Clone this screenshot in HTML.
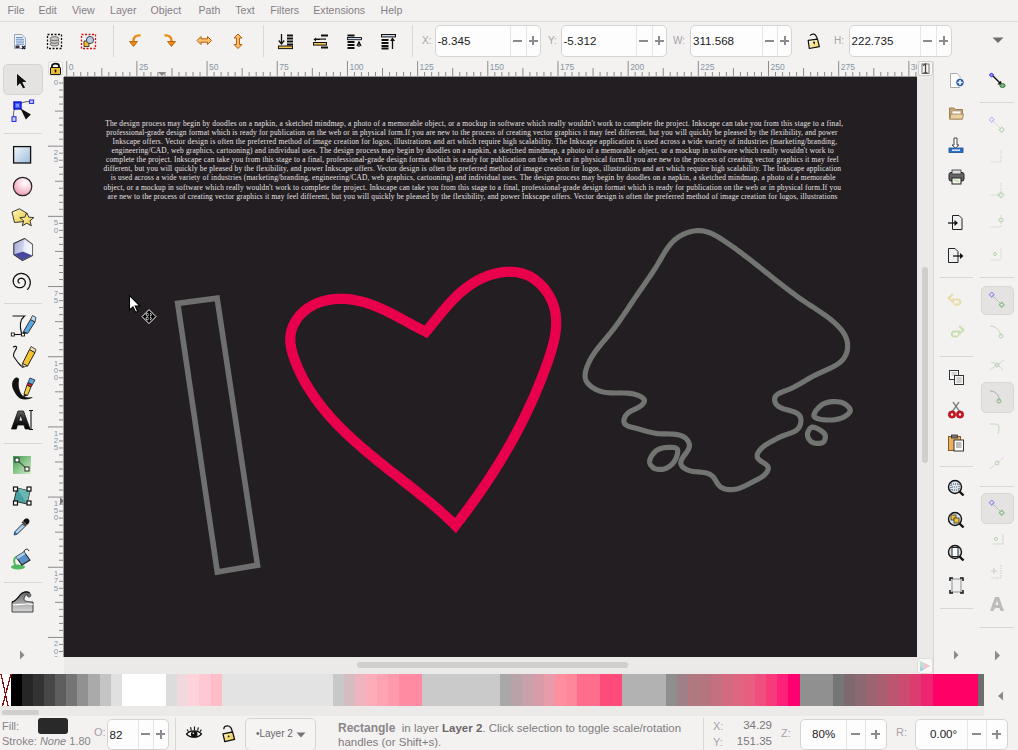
<!DOCTYPE html><html><head><meta charset="utf-8"><style>
*{margin:0;padding:0;box-sizing:border-box}
html,body{width:1018px;height:750px;overflow:hidden;background:#f4f2f1;font-family:"Liberation Sans", sans-serif;}
.a{position:absolute}
.ic{position:absolute;overflow:visible}
.menu{position:absolute;top:4px;font-size:10.6px;color:#857e86;}
.sb{position:absolute;background:#fdfdfd;border:1px solid #d6d4d1;border-radius:5px}
.sb .t{position:absolute;font-size:12px;color:#2a2a2a;}
.lbl{position:absolute;font-size:10px;color:#a8a2aa}
.sep{position:absolute;background:#d9d7d4}
</style></head><body>

<div class="menu" style="left:7.5px">File</div>
<div class="menu" style="left:38.5px">Edit</div>
<div class="menu" style="left:72px">View</div>
<div class="menu" style="left:110px">Layer</div>
<div class="menu" style="left:150.5px">Object</div>
<div class="menu" style="left:198.5px">Path</div>
<div class="menu" style="left:235.3px">Text</div>
<div class="menu" style="left:270.3px">Filters</div>
<div class="menu" style="left:313.3px">Extensions</div>
<div class="menu" style="left:380.5px">Help</div>
<div class="a" style="left:0;top:21px;width:1018px;height:1px;background:#dedcda"></div>
<div class="sep" style="left:112.5px;top:25px;width:1px;height:32px"></div>
<div class="sep" style="left:262.5px;top:25px;width:1px;height:32px"></div>
<div class="sep" style="left:411.5px;top:25px;width:1px;height:32px"></div>
<svg class="ic" style="left:13px;top:33px" width="14" height="17" viewBox="0 0 14 17" ><path d="M1.5,1.5 H9 L12.5,5 V15.5 H1.5 Z" fill="#eef2f8" stroke="#9aa6b8" stroke-width="1"/>
<g fill="#6f96c8"><rect x="3" y="4" width="7" height="1.2"/><rect x="3" y="6.2" width="8" height="1.2"/><rect x="3" y="8.4" width="8" height="1.2"/><rect x="3" y="10.6" width="8" height="1.2"/></g>
<rect x="2.5" y="12.5" width="4" height="2.5" fill="#334"/><path d="M9,13 l3,3 M12,13 l-3,3" stroke="#111" stroke-width="1.2"/></svg>
<svg class="ic" style="left:46px;top:33px" width="17" height="17" viewBox="0 0 17 17" ><rect x="1.5" y="1.5" width="14" height="14" fill="none" stroke="#111" stroke-width="1.3" stroke-dasharray="2,1.5"/>
<g fill="#c8c8c8" stroke="#555" stroke-width="0.8"><ellipse cx="8.5" cy="11" rx="4.5" ry="2"/><ellipse cx="8.5" cy="8.3" rx="4.5" ry="2"/><ellipse cx="8.5" cy="5.6" rx="4.5" ry="2"/></g></svg>
<svg class="ic" style="left:80px;top:33px" width="17" height="17" viewBox="0 0 17 17" ><rect x="1.5" y="1.5" width="14" height="14" fill="none" stroke="#d01010" stroke-width="1.3" stroke-dasharray="2,1.5"/>
<path d="M4,8 H9 V13.5 H4 Z" fill="#f0c030" stroke="#333" stroke-width="0.9"/>
<circle cx="10" cy="7" r="3.6" fill="#b8cce4" stroke="#334" stroke-width="0.9"/></svg>
<svg class="ic" style="left:127px;top:33px" width="16" height="16" viewBox="0 0 16 16" ><path d="M13.5,2.5 C9,2 6,4 6.5,9" fill="none" stroke="#ea8a1a" stroke-width="2.4"/>
<path d="M2.5,8.5 L10.5,8.5 L6.5,13.5 Z" fill="#ea8a1a" stroke="#b85e08" stroke-width="0.9" stroke-linejoin="round"/></svg>
<svg class="ic" style="left:162px;top:33px" width="16" height="16" viewBox="0 0 16 16" ><path d="M2.5,2.5 C7,2 10,4 9.5,9" fill="none" stroke="#ea8a1a" stroke-width="2.4"/>
<path d="M5.5,8.5 L13.5,8.5 L9.5,13.5 Z" fill="#ea8a1a" stroke="#b85e08" stroke-width="0.9" stroke-linejoin="round"/></svg>
<svg class="ic" style="left:196px;top:35px" width="17" height="12" viewBox="0 0 17 12" ><path d="M1,5.5 L5,1.5 V3.8 H11.5 V1.5 L15.5,5.5 L11.5,9.5 V7.2 H5 V9.5 Z" fill="#f6c070" stroke="#b85e08" stroke-width="1" stroke-linejoin="round"/></svg>
<svg class="ic" style="left:232px;top:33px" width="12" height="17" viewBox="0 0 12 17" ><path d="M6,1 L10,5 H7.5 V11.5 H10 L6,15.5 L2,11.5 H4.5 V5 H2 Z" fill="#f6c070" stroke="#b85e08" stroke-width="1" stroke-linejoin="round"/></svg>
<svg class="ic" style="left:277px;top:33px" width="17" height="17" viewBox="0 0 17 17" ><path d="M4.5,1 V10" stroke="#111" stroke-width="1.3"/><path d="M1.8,7.5 L4.5,11 L7.2,7.5" fill="none" stroke="#111" stroke-width="1.3"/><rect x="10" y="1.5" width="6" height="2" fill="#111"/><rect x="10" y="4.5" width="6" height="2" fill="#111"/><rect x="10" y="7.5" width="6" height="2" fill="#111"/><rect x="10" y="10.5" width="6" height="2" fill="#111"/><rect x="1.5" y="13" width="14" height="2.6" fill="#f4c850" stroke="#111" stroke-width="1"/></svg>
<svg class="ic" style="left:312px;top:33px" width="17" height="17" viewBox="0 0 17 17" ><path d="M2,6.5 H8" stroke="#111" stroke-width="1"/><path d="M1.5,6.5 L4,4.5 V8.5 Z" fill="#111"/><rect x="9" y="1.5" width="7" height="2" fill="#111"/><rect x="9" y="13.5" width="7" height="2" fill="#111"/><rect x="4" y="5.5" width="10" height="1.2" fill="#111"/><rect x="1.5" y="9.5" width="13" height="2.6" fill="#f4c850" stroke="#111" stroke-width="1"/></svg>
<svg class="ic" style="left:346px;top:33px" width="17" height="17" viewBox="0 0 17 17" ><rect x="1.5" y="1.5" width="7" height="2" fill="#111"/><rect x="1.5" y="8" width="7" height="2" fill="#111"/><rect x="1.5" y="11" width="7" height="2" fill="#111"/><rect x="1.5" y="14" width="7" height="2" fill="#111"/><rect x="1.5" y="4.5" width="14" height="2.2" fill="#c8d8f0" stroke="#111" stroke-width="0.9"/><path d="M11,13 L13,9 L15,13" fill="none" stroke="#111" stroke-width="1.3"/><path d="M13,9 V14" stroke="#111" stroke-width="1.2"/></svg>
<svg class="ic" style="left:380px;top:33px" width="17" height="17" viewBox="0 0 17 17" ><rect x="1.5" y="1.5" width="14" height="2.4" fill="#c8d8f0" stroke="#111" stroke-width="1"/><rect x="1.5" y="6" width="7" height="2" fill="#111"/><rect x="1.5" y="9" width="7" height="2" fill="#111"/><rect x="1.5" y="12" width="7" height="2" fill="#111"/><rect x="1.5" y="14.5" width="7" height="2" fill="#111"/><path d="M12.5,5 V16" stroke="#111" stroke-width="1.3"/><path d="M10,8 L12.5,4.5 L15,8" fill="#111"/></svg>
<div class="lbl" style="left:422px;top:35px">X:</div>
<div class="sb" style="left:434.5px;top:25px;width:106.0px;height:31.5px"></div><div class="a" style="left:509.5px;top:26px;width:1px;height:29.5px;background:#e8e6e3"></div><div class="a" style="left:525.5px;top:26px;width:1px;height:29.5px;background:#e8e6e3"></div><div class="a" style="left:513.0px;top:39.75px;width:9px;height:2px;background:#8c8a8c"></div><div class="a" style="left:528.5px;top:39.75px;width:9px;height:2px;background:#8c8a8c"></div><div class="a" style="left:532.0px;top:36.25px;width:2px;height:9px;background:#8c8a8c"></div><div class="a" style="left:437.5px;top:33.15px;font-size:11.6px;color:#222;line-height:15px">-8.345</div>
<div class="lbl" style="left:548px;top:35px">Y:</div>
<div class="sb" style="left:560.5px;top:25px;width:106.0px;height:31.5px"></div><div class="a" style="left:635.5px;top:26px;width:1px;height:29.5px;background:#e8e6e3"></div><div class="a" style="left:651.5px;top:26px;width:1px;height:29.5px;background:#e8e6e3"></div><div class="a" style="left:639.0px;top:39.75px;width:9px;height:2px;background:#8c8a8c"></div><div class="a" style="left:654.5px;top:39.75px;width:9px;height:2px;background:#8c8a8c"></div><div class="a" style="left:658.0px;top:36.25px;width:2px;height:9px;background:#8c8a8c"></div><div class="a" style="left:563.5px;top:33.15px;font-size:11.6px;color:#222;line-height:15px">-5.312</div>
<div class="lbl" style="left:673px;top:35px">W:</div>
<div class="sb" style="left:690px;top:25px;width:102px;height:31.5px"></div><div class="a" style="left:761.5px;top:26px;width:1px;height:29.5px;background:#e8e6e3"></div><div class="a" style="left:777px;top:26px;width:1px;height:29.5px;background:#e8e6e3"></div><div class="a" style="left:764.75px;top:39.75px;width:9px;height:2px;background:#8c8a8c"></div><div class="a" style="left:780.0px;top:39.75px;width:9px;height:2px;background:#8c8a8c"></div><div class="a" style="left:783.5px;top:36.25px;width:2px;height:9px;background:#8c8a8c"></div><div class="a" style="left:693px;top:33.15px;font-size:11.6px;color:#222;line-height:15px">311.568</div>
<div class="lbl" style="left:834px;top:35px">H:</div>
<div class="sb" style="left:848.5px;top:25px;width:103.0px;height:31.5px"></div><div class="a" style="left:920px;top:26px;width:1px;height:29.5px;background:#e8e6e3"></div><div class="a" style="left:935.5px;top:26px;width:1px;height:29.5px;background:#e8e6e3"></div><div class="a" style="left:923.25px;top:39.75px;width:9px;height:2px;background:#8c8a8c"></div><div class="a" style="left:939.0px;top:39.75px;width:9px;height:2px;background:#8c8a8c"></div><div class="a" style="left:942.5px;top:36.25px;width:2px;height:9px;background:#8c8a8c"></div><div class="a" style="left:851.5px;top:33.15px;font-size:11.6px;color:#222;line-height:15px">222.735</div>
<svg class="ic" style="left:804px;top:30px" width="20" height="22" viewBox="0 0 20 22" ><defs><linearGradient id="glk2" x1="0" y1="0" x2="1" y2="1"><stop offset="0" stop-color="#ffffff"/><stop offset="1" stop-color="#f0d040"/></linearGradient></defs><path d="M6.1,5.6 C7,4.3 8.5,4 9.8,4.2 C11.5,4.5 12.6,6.2 13.5,9.6" fill="none" stroke="#111" stroke-width="1.2"/><path d="M4.2,10.3 L13.5,9.2 L15.4,16.7 L5.3,18.5 Z" fill="url(#glk2)" stroke="#111" stroke-width="1.2" stroke-linejoin="round"/><circle cx="10" cy="12.6" r="1" fill="#111"/><path d="M9.6,13 L10.6,13 L10.4,15 Z" fill="#111"/></svg>
<svg class="ic" style="left:992px;top:37px" width="12" height="7" viewBox="0 0 12 7" ><path d="M0.5,0.5 H11.5 L6,6 Z" fill="#6e6e6e"/></svg>
<svg class="ic" style="left:64px;top:61px;overflow:hidden" width="853" height="16"><rect x="0" y="15" width="870" height="1" fill="#9a9898"/><rect x="2.20" y="0" width="1" height="15" fill="#8c8a8a"/><text x="4.70" y="9" font-size="8.5" fill="#8696a6" font-family="Liberation Sans">0</text><rect x="9.22" y="11" width="1" height="4" fill="#8c8a8a"/><rect x="16.24" y="11" width="1" height="4" fill="#8c8a8a"/><rect x="23.25" y="11" width="1" height="4" fill="#8c8a8a"/><rect x="30.27" y="11" width="1" height="4" fill="#8c8a8a"/><rect x="37.29" y="7" width="1" height="8" fill="#8c8a8a"/><rect x="44.31" y="11" width="1" height="4" fill="#8c8a8a"/><rect x="51.33" y="11" width="1" height="4" fill="#8c8a8a"/><rect x="58.34" y="11" width="1" height="4" fill="#8c8a8a"/><rect x="65.36" y="11" width="1" height="4" fill="#8c8a8a"/><rect x="72.38" y="0" width="1" height="15" fill="#8c8a8a"/><text x="74.88" y="9" font-size="8.5" fill="#8696a6" font-family="Liberation Sans">25</text><rect x="79.40" y="11" width="1" height="4" fill="#8c8a8a"/><rect x="86.42" y="11" width="1" height="4" fill="#8c8a8a"/><rect x="93.43" y="11" width="1" height="4" fill="#8c8a8a"/><rect x="100.45" y="11" width="1" height="4" fill="#8c8a8a"/><rect x="107.47" y="7" width="1" height="8" fill="#8c8a8a"/><rect x="114.49" y="11" width="1" height="4" fill="#8c8a8a"/><rect x="121.51" y="11" width="1" height="4" fill="#8c8a8a"/><rect x="128.52" y="11" width="1" height="4" fill="#8c8a8a"/><rect x="135.54" y="11" width="1" height="4" fill="#8c8a8a"/><rect x="142.56" y="0" width="1" height="15" fill="#8c8a8a"/><text x="145.06" y="9" font-size="8.5" fill="#8696a6" font-family="Liberation Sans">50</text><rect x="149.58" y="11" width="1" height="4" fill="#8c8a8a"/><rect x="156.60" y="11" width="1" height="4" fill="#8c8a8a"/><rect x="163.61" y="11" width="1" height="4" fill="#8c8a8a"/><rect x="170.63" y="11" width="1" height="4" fill="#8c8a8a"/><rect x="177.65" y="7" width="1" height="8" fill="#8c8a8a"/><rect x="184.67" y="11" width="1" height="4" fill="#8c8a8a"/><rect x="191.69" y="11" width="1" height="4" fill="#8c8a8a"/><rect x="198.70" y="11" width="1" height="4" fill="#8c8a8a"/><rect x="205.72" y="11" width="1" height="4" fill="#8c8a8a"/><rect x="212.74" y="0" width="1" height="15" fill="#8c8a8a"/><text x="215.24" y="9" font-size="8.5" fill="#8696a6" font-family="Liberation Sans">75</text><rect x="219.76" y="11" width="1" height="4" fill="#8c8a8a"/><rect x="226.78" y="11" width="1" height="4" fill="#8c8a8a"/><rect x="233.79" y="11" width="1" height="4" fill="#8c8a8a"/><rect x="240.81" y="11" width="1" height="4" fill="#8c8a8a"/><rect x="247.83" y="7" width="1" height="8" fill="#8c8a8a"/><rect x="254.85" y="11" width="1" height="4" fill="#8c8a8a"/><rect x="261.87" y="11" width="1" height="4" fill="#8c8a8a"/><rect x="268.88" y="11" width="1" height="4" fill="#8c8a8a"/><rect x="275.90" y="11" width="1" height="4" fill="#8c8a8a"/><rect x="282.92" y="0" width="1" height="15" fill="#8c8a8a"/><text x="285.42" y="9" font-size="8.5" fill="#8696a6" font-family="Liberation Sans">100</text><rect x="289.94" y="11" width="1" height="4" fill="#8c8a8a"/><rect x="296.96" y="11" width="1" height="4" fill="#8c8a8a"/><rect x="303.97" y="11" width="1" height="4" fill="#8c8a8a"/><rect x="310.99" y="11" width="1" height="4" fill="#8c8a8a"/><rect x="318.01" y="7" width="1" height="8" fill="#8c8a8a"/><rect x="325.03" y="11" width="1" height="4" fill="#8c8a8a"/><rect x="332.05" y="11" width="1" height="4" fill="#8c8a8a"/><rect x="339.06" y="11" width="1" height="4" fill="#8c8a8a"/><rect x="346.08" y="11" width="1" height="4" fill="#8c8a8a"/><rect x="353.10" y="0" width="1" height="15" fill="#8c8a8a"/><text x="355.60" y="9" font-size="8.5" fill="#8696a6" font-family="Liberation Sans">125</text><rect x="360.12" y="11" width="1" height="4" fill="#8c8a8a"/><rect x="367.14" y="11" width="1" height="4" fill="#8c8a8a"/><rect x="374.15" y="11" width="1" height="4" fill="#8c8a8a"/><rect x="381.17" y="11" width="1" height="4" fill="#8c8a8a"/><rect x="388.19" y="7" width="1" height="8" fill="#8c8a8a"/><rect x="395.21" y="11" width="1" height="4" fill="#8c8a8a"/><rect x="402.23" y="11" width="1" height="4" fill="#8c8a8a"/><rect x="409.24" y="11" width="1" height="4" fill="#8c8a8a"/><rect x="416.26" y="11" width="1" height="4" fill="#8c8a8a"/><rect x="423.28" y="0" width="1" height="15" fill="#8c8a8a"/><text x="425.78" y="9" font-size="8.5" fill="#8696a6" font-family="Liberation Sans">150</text><rect x="430.30" y="11" width="1" height="4" fill="#8c8a8a"/><rect x="437.32" y="11" width="1" height="4" fill="#8c8a8a"/><rect x="444.33" y="11" width="1" height="4" fill="#8c8a8a"/><rect x="451.35" y="11" width="1" height="4" fill="#8c8a8a"/><rect x="458.37" y="7" width="1" height="8" fill="#8c8a8a"/><rect x="465.39" y="11" width="1" height="4" fill="#8c8a8a"/><rect x="472.41" y="11" width="1" height="4" fill="#8c8a8a"/><rect x="479.42" y="11" width="1" height="4" fill="#8c8a8a"/><rect x="486.44" y="11" width="1" height="4" fill="#8c8a8a"/><rect x="493.46" y="0" width="1" height="15" fill="#8c8a8a"/><text x="495.96" y="9" font-size="8.5" fill="#8696a6" font-family="Liberation Sans">175</text><rect x="500.48" y="11" width="1" height="4" fill="#8c8a8a"/><rect x="507.50" y="11" width="1" height="4" fill="#8c8a8a"/><rect x="514.51" y="11" width="1" height="4" fill="#8c8a8a"/><rect x="521.53" y="11" width="1" height="4" fill="#8c8a8a"/><rect x="528.55" y="7" width="1" height="8" fill="#8c8a8a"/><rect x="535.57" y="11" width="1" height="4" fill="#8c8a8a"/><rect x="542.59" y="11" width="1" height="4" fill="#8c8a8a"/><rect x="549.60" y="11" width="1" height="4" fill="#8c8a8a"/><rect x="556.62" y="11" width="1" height="4" fill="#8c8a8a"/><rect x="563.64" y="0" width="1" height="15" fill="#8c8a8a"/><text x="566.14" y="9" font-size="8.5" fill="#8696a6" font-family="Liberation Sans">200</text><rect x="570.66" y="11" width="1" height="4" fill="#8c8a8a"/><rect x="577.68" y="11" width="1" height="4" fill="#8c8a8a"/><rect x="584.69" y="11" width="1" height="4" fill="#8c8a8a"/><rect x="591.71" y="11" width="1" height="4" fill="#8c8a8a"/><rect x="598.73" y="7" width="1" height="8" fill="#8c8a8a"/><rect x="605.75" y="11" width="1" height="4" fill="#8c8a8a"/><rect x="612.77" y="11" width="1" height="4" fill="#8c8a8a"/><rect x="619.78" y="11" width="1" height="4" fill="#8c8a8a"/><rect x="626.80" y="11" width="1" height="4" fill="#8c8a8a"/><rect x="633.82" y="0" width="1" height="15" fill="#8c8a8a"/><text x="636.32" y="9" font-size="8.5" fill="#8696a6" font-family="Liberation Sans">225</text><rect x="640.84" y="11" width="1" height="4" fill="#8c8a8a"/><rect x="647.86" y="11" width="1" height="4" fill="#8c8a8a"/><rect x="654.87" y="11" width="1" height="4" fill="#8c8a8a"/><rect x="661.89" y="11" width="1" height="4" fill="#8c8a8a"/><rect x="668.91" y="7" width="1" height="8" fill="#8c8a8a"/><rect x="675.93" y="11" width="1" height="4" fill="#8c8a8a"/><rect x="682.95" y="11" width="1" height="4" fill="#8c8a8a"/><rect x="689.96" y="11" width="1" height="4" fill="#8c8a8a"/><rect x="696.98" y="11" width="1" height="4" fill="#8c8a8a"/><rect x="704.00" y="0" width="1" height="15" fill="#8c8a8a"/><text x="706.50" y="9" font-size="8.5" fill="#8696a6" font-family="Liberation Sans">250</text><rect x="711.02" y="11" width="1" height="4" fill="#8c8a8a"/><rect x="718.04" y="11" width="1" height="4" fill="#8c8a8a"/><rect x="725.05" y="11" width="1" height="4" fill="#8c8a8a"/><rect x="732.07" y="11" width="1" height="4" fill="#8c8a8a"/><rect x="739.09" y="7" width="1" height="8" fill="#8c8a8a"/><rect x="746.11" y="11" width="1" height="4" fill="#8c8a8a"/><rect x="753.13" y="11" width="1" height="4" fill="#8c8a8a"/><rect x="760.14" y="11" width="1" height="4" fill="#8c8a8a"/><rect x="767.16" y="11" width="1" height="4" fill="#8c8a8a"/><rect x="774.18" y="0" width="1" height="15" fill="#8c8a8a"/><text x="776.68" y="9" font-size="8.5" fill="#8696a6" font-family="Liberation Sans">275</text><rect x="781.20" y="11" width="1" height="4" fill="#8c8a8a"/><rect x="788.22" y="11" width="1" height="4" fill="#8c8a8a"/><rect x="795.23" y="11" width="1" height="4" fill="#8c8a8a"/><rect x="802.25" y="11" width="1" height="4" fill="#8c8a8a"/><rect x="809.27" y="7" width="1" height="8" fill="#8c8a8a"/><rect x="816.29" y="11" width="1" height="4" fill="#8c8a8a"/><rect x="823.31" y="11" width="1" height="4" fill="#8c8a8a"/><rect x="830.32" y="11" width="1" height="4" fill="#8c8a8a"/><rect x="837.34" y="11" width="1" height="4" fill="#8c8a8a"/><rect x="844.36" y="0" width="1" height="15" fill="#8c8a8a"/><text x="846.86" y="9" font-size="8.5" fill="#8696a6" font-family="Liberation Sans">300</text><rect x="851.38" y="11" width="1" height="4" fill="#8c8a8a"/><rect x="858.40" y="11" width="1" height="4" fill="#8c8a8a"/></svg>
<svg class="ic" style="left:158px;top:72px" width="8" height="4"><path d="M0,0 H8 L4,4Z" fill="#888"/></svg>
<svg class="ic" style="left:60px;top:497px" width="4" height="8"><path d="M0,0 L4,4 L0,8Z" fill="#777"/></svg>
<svg class="ic" style="left:47px;top:77px;overflow:hidden" width="17" height="580"><rect x="16" y="0" width="1" height="580" fill="#9a9898"/><rect x="1" y="-1.50" width="15" height="1" fill="#8c8a8a"/><text x="9" y="8.00" font-size="8" text-anchor="middle" fill="#8696a6" font-family="Liberation Sans">0</text><rect x="12" y="5.52" width="4" height="1" fill="#8c8a8a"/><rect x="12" y="12.54" width="4" height="1" fill="#8c8a8a"/><rect x="12" y="19.55" width="4" height="1" fill="#8c8a8a"/><rect x="12" y="26.57" width="4" height="1" fill="#8c8a8a"/><rect x="8" y="33.59" width="8" height="1" fill="#8c8a8a"/><rect x="12" y="40.61" width="4" height="1" fill="#8c8a8a"/><rect x="12" y="47.63" width="4" height="1" fill="#8c8a8a"/><rect x="12" y="54.64" width="4" height="1" fill="#8c8a8a"/><rect x="12" y="61.66" width="4" height="1" fill="#8c8a8a"/><rect x="1" y="68.68" width="15" height="1" fill="#8c8a8a"/><text x="9" y="78.18" font-size="8" text-anchor="middle" fill="#8696a6" font-family="Liberation Sans">2</text><text x="9" y="85.38" font-size="8" text-anchor="middle" fill="#8696a6" font-family="Liberation Sans">5</text><rect x="12" y="75.70" width="4" height="1" fill="#8c8a8a"/><rect x="12" y="82.72" width="4" height="1" fill="#8c8a8a"/><rect x="12" y="89.73" width="4" height="1" fill="#8c8a8a"/><rect x="12" y="96.75" width="4" height="1" fill="#8c8a8a"/><rect x="8" y="103.77" width="8" height="1" fill="#8c8a8a"/><rect x="12" y="110.79" width="4" height="1" fill="#8c8a8a"/><rect x="12" y="117.81" width="4" height="1" fill="#8c8a8a"/><rect x="12" y="124.82" width="4" height="1" fill="#8c8a8a"/><rect x="12" y="131.84" width="4" height="1" fill="#8c8a8a"/><rect x="1" y="138.86" width="15" height="1" fill="#8c8a8a"/><text x="9" y="148.36" font-size="8" text-anchor="middle" fill="#8696a6" font-family="Liberation Sans">5</text><text x="9" y="155.56" font-size="8" text-anchor="middle" fill="#8696a6" font-family="Liberation Sans">0</text><rect x="12" y="145.88" width="4" height="1" fill="#8c8a8a"/><rect x="12" y="152.90" width="4" height="1" fill="#8c8a8a"/><rect x="12" y="159.91" width="4" height="1" fill="#8c8a8a"/><rect x="12" y="166.93" width="4" height="1" fill="#8c8a8a"/><rect x="8" y="173.95" width="8" height="1" fill="#8c8a8a"/><rect x="12" y="180.97" width="4" height="1" fill="#8c8a8a"/><rect x="12" y="187.99" width="4" height="1" fill="#8c8a8a"/><rect x="12" y="195.00" width="4" height="1" fill="#8c8a8a"/><rect x="12" y="202.02" width="4" height="1" fill="#8c8a8a"/><rect x="1" y="209.04" width="15" height="1" fill="#8c8a8a"/><text x="9" y="218.54" font-size="8" text-anchor="middle" fill="#8696a6" font-family="Liberation Sans">7</text><text x="9" y="225.74" font-size="8" text-anchor="middle" fill="#8696a6" font-family="Liberation Sans">5</text><rect x="12" y="216.06" width="4" height="1" fill="#8c8a8a"/><rect x="12" y="223.08" width="4" height="1" fill="#8c8a8a"/><rect x="12" y="230.09" width="4" height="1" fill="#8c8a8a"/><rect x="12" y="237.11" width="4" height="1" fill="#8c8a8a"/><rect x="8" y="244.13" width="8" height="1" fill="#8c8a8a"/><rect x="12" y="251.15" width="4" height="1" fill="#8c8a8a"/><rect x="12" y="258.17" width="4" height="1" fill="#8c8a8a"/><rect x="12" y="265.18" width="4" height="1" fill="#8c8a8a"/><rect x="12" y="272.20" width="4" height="1" fill="#8c8a8a"/><rect x="1" y="279.22" width="15" height="1" fill="#8c8a8a"/><text x="9" y="288.72" font-size="8" text-anchor="middle" fill="#8696a6" font-family="Liberation Sans">1</text><text x="9" y="295.92" font-size="8" text-anchor="middle" fill="#8696a6" font-family="Liberation Sans">0</text><text x="9" y="303.12" font-size="8" text-anchor="middle" fill="#8696a6" font-family="Liberation Sans">0</text><rect x="12" y="286.24" width="4" height="1" fill="#8c8a8a"/><rect x="12" y="293.26" width="4" height="1" fill="#8c8a8a"/><rect x="12" y="300.27" width="4" height="1" fill="#8c8a8a"/><rect x="12" y="307.29" width="4" height="1" fill="#8c8a8a"/><rect x="8" y="314.31" width="8" height="1" fill="#8c8a8a"/><rect x="12" y="321.33" width="4" height="1" fill="#8c8a8a"/><rect x="12" y="328.35" width="4" height="1" fill="#8c8a8a"/><rect x="12" y="335.36" width="4" height="1" fill="#8c8a8a"/><rect x="12" y="342.38" width="4" height="1" fill="#8c8a8a"/><rect x="1" y="349.40" width="15" height="1" fill="#8c8a8a"/><text x="9" y="358.90" font-size="8" text-anchor="middle" fill="#8696a6" font-family="Liberation Sans">1</text><text x="9" y="366.10" font-size="8" text-anchor="middle" fill="#8696a6" font-family="Liberation Sans">2</text><text x="9" y="373.30" font-size="8" text-anchor="middle" fill="#8696a6" font-family="Liberation Sans">5</text><rect x="12" y="356.42" width="4" height="1" fill="#8c8a8a"/><rect x="12" y="363.44" width="4" height="1" fill="#8c8a8a"/><rect x="12" y="370.45" width="4" height="1" fill="#8c8a8a"/><rect x="12" y="377.47" width="4" height="1" fill="#8c8a8a"/><rect x="8" y="384.49" width="8" height="1" fill="#8c8a8a"/><rect x="12" y="391.51" width="4" height="1" fill="#8c8a8a"/><rect x="12" y="398.53" width="4" height="1" fill="#8c8a8a"/><rect x="12" y="405.54" width="4" height="1" fill="#8c8a8a"/><rect x="12" y="412.56" width="4" height="1" fill="#8c8a8a"/><rect x="1" y="419.58" width="15" height="1" fill="#8c8a8a"/><text x="9" y="429.08" font-size="8" text-anchor="middle" fill="#8696a6" font-family="Liberation Sans">1</text><text x="9" y="436.28" font-size="8" text-anchor="middle" fill="#8696a6" font-family="Liberation Sans">5</text><text x="9" y="443.48" font-size="8" text-anchor="middle" fill="#8696a6" font-family="Liberation Sans">0</text><rect x="12" y="426.60" width="4" height="1" fill="#8c8a8a"/><rect x="12" y="433.62" width="4" height="1" fill="#8c8a8a"/><rect x="12" y="440.63" width="4" height="1" fill="#8c8a8a"/><rect x="12" y="447.65" width="4" height="1" fill="#8c8a8a"/><rect x="8" y="454.67" width="8" height="1" fill="#8c8a8a"/><rect x="12" y="461.69" width="4" height="1" fill="#8c8a8a"/><rect x="12" y="468.71" width="4" height="1" fill="#8c8a8a"/><rect x="12" y="475.72" width="4" height="1" fill="#8c8a8a"/><rect x="12" y="482.74" width="4" height="1" fill="#8c8a8a"/><rect x="1" y="489.76" width="15" height="1" fill="#8c8a8a"/><text x="9" y="499.26" font-size="8" text-anchor="middle" fill="#8696a6" font-family="Liberation Sans">1</text><text x="9" y="506.46" font-size="8" text-anchor="middle" fill="#8696a6" font-family="Liberation Sans">7</text><text x="9" y="513.66" font-size="8" text-anchor="middle" fill="#8696a6" font-family="Liberation Sans">5</text><rect x="12" y="496.78" width="4" height="1" fill="#8c8a8a"/><rect x="12" y="503.80" width="4" height="1" fill="#8c8a8a"/><rect x="12" y="510.81" width="4" height="1" fill="#8c8a8a"/><rect x="12" y="517.83" width="4" height="1" fill="#8c8a8a"/><rect x="8" y="524.85" width="8" height="1" fill="#8c8a8a"/><rect x="12" y="531.87" width="4" height="1" fill="#8c8a8a"/><rect x="12" y="538.89" width="4" height="1" fill="#8c8a8a"/><rect x="12" y="545.90" width="4" height="1" fill="#8c8a8a"/><rect x="12" y="552.92" width="4" height="1" fill="#8c8a8a"/><rect x="1" y="559.94" width="15" height="1" fill="#8c8a8a"/><text x="9" y="569.44" font-size="8" text-anchor="middle" fill="#8696a6" font-family="Liberation Sans">2</text><text x="9" y="576.64" font-size="8" text-anchor="middle" fill="#8696a6" font-family="Liberation Sans">0</text><text x="9" y="583.84" font-size="8" text-anchor="middle" fill="#8696a6" font-family="Liberation Sans">0</text><rect x="12" y="566.96" width="4" height="1" fill="#8c8a8a"/><rect x="12" y="573.98" width="4" height="1" fill="#8c8a8a"/></svg>
<svg class="ic" style="left:48px;top:61px" width="15" height="15" viewBox="0 0 15 15" ><rect x="0.5" y="0.5" width="14" height="14" rx="2" fill="#f8f8f6" stroke="#dcdad6"/>
<path d="M4,7 V5 C4,1.8 11,1.8 11,5 V7" fill="none" stroke="#111" stroke-width="1.8"/>
<rect x="2.5" y="6.5" width="10" height="7" rx="0.5" fill="#f0c030" stroke="#111" stroke-width="1"/><rect x="6.7" y="8.5" width="1.6" height="3" fill="#111"/></svg>
<div class="a" style="left:64px;top:77px;width:853px;height:580px;background:#221e21;overflow:hidden">
<svg class="ic" style="left:-64px;top:-77px" width="1018" height="750"><g font-family="Liberation Serif" font-size="7.4" fill="#e8e4e4"><text x="105.2" y="125.50" textLength="737.8" lengthAdjust="spacing">The design process may begin by doodles on a napkin, a sketched mindmap, a photo of a memorable object, or a mockup in software which really wouldn&#39;t work to complete the project. Inkscape can take you from this stage to a final,</text><text x="106.3" y="134.66" textLength="731.1" lengthAdjust="spacing">professional-grade design format which is ready for publication on the web or in physical form.If you are new to the process of creating vector graphics it may feel different, but you will quickly be pleased by the flexibility, and power</text><text x="112.6" y="143.83" textLength="724.4" lengthAdjust="spacing">Inkscape offers. Vector design is often the preferred method of image creation for logos, illustrations and art which require high scalability. The Inkscape application is used across a wide variety of industries (marketing/branding,</text><text x="111.5" y="153.00" textLength="722.1" lengthAdjust="spacing">engineering/CAD, web graphics, cartooning) and individual uses. The design process may begin by doodles on a napkin, a sketched mindmap, a photo of a memorable object, or a mockup in software which really wouldn&#39;t work to</text><text x="106" y="162.16" textLength="732.5" lengthAdjust="spacing">complete the project. Inkscape can take you from this stage to a final, professional-grade design format which is ready for publication on the web or in physical form.If you are new to the process of creating vector graphics it may feel</text><text x="103.6" y="171.32" textLength="737.4" lengthAdjust="spacing">different, but you will quickly be pleased by the flexibility, and power Inkscape offers. Vector design is often the preferred method of image creation for logos, illustrations and art which require high scalability. The Inkscape application</text><text x="110.7" y="180.49" textLength="724.8" lengthAdjust="spacing">is used across a wide variety of industries (marketing/branding, engineering/CAD, web graphics, cartooning) and individual uses. The design process may begin by doodles on a napkin, a sketched mindmap, a photo of a memorable</text><text x="103.6" y="189.66" textLength="737.4" lengthAdjust="spacing">object, or a mockup in software which really wouldn&#39;t work to complete the project. Inkscape can take you from this stage to a final, professional-grade design format which is ready for publication on the web or in physical form.If you</text><text x="107.6" y="198.82" textLength="729.8" lengthAdjust="spacing">are new to the process of creating vector graphics it may feel different, but you will quickly be pleased by the flexibility, and power Inkscape offers. Vector design is often the preferred method of image creation for logos, illustrations</text></g><path d="M177.7,303.4 L217.1,298.2 L257.5,565.2 L217.3,572.0 Z" fill="none" stroke="#6f6f6f" stroke-width="5.6" stroke-linejoin="miter"/><path d="M425.80,331.80 L422.76,330.29 L419.71,328.72 L416.65,327.11 L413.58,325.47 L410.51,323.79 L407.42,322.10 L404.32,320.40 L401.21,318.70 L398.08,317.01 L394.94,315.34 L391.77,313.69 L388.59,312.09 L385.39,310.53 L382.17,309.03 L378.92,307.60 L375.65,306.24 L372.35,304.96 L369.03,303.78 L365.68,302.70 L362.30,301.74 L358.88,300.89 L355.44,300.18 L351.96,299.60 L348.44,299.18 L344.89,298.91 L341.31,298.81 L337.69,298.89 L334.06,299.15 L330.45,299.61 L326.87,300.26 L323.34,301.11 L319.88,302.19 L316.51,303.48 L313.25,305.00 L310.12,306.75 L307.15,308.74 L304.34,310.95 L301.73,313.36 L299.33,315.94 L297.17,318.69 L295.26,321.58 L293.63,324.60 L292.30,327.72 L291.28,330.93 L290.61,334.20 L290.29,337.53 L290.29,340.89 L290.59,344.28 L291.13,347.69 L291.90,351.10 L292.86,354.50 L293.97,357.88 L295.19,361.23 L296.51,364.54 L297.89,367.80 L299.34,371.02 L300.86,374.19 L302.44,377.31 L304.08,380.39 L305.78,383.43 L307.55,386.43 L309.37,389.39 L311.24,392.31 L313.17,395.20 L315.16,398.04 L317.19,400.85 L319.27,403.63 L321.41,406.37 L323.58,409.08 L325.81,411.76 L328.07,414.40 L330.38,417.02 L332.72,419.61 L335.11,422.17 L337.53,424.70 L339.98,427.21 L342.47,429.69 L344.99,432.15 L347.54,434.59 L350.12,437.01 L352.73,439.40 L355.36,441.78 L358.01,444.14 L360.69,446.48 L363.38,448.80 L366.10,451.11 L368.83,453.41 L371.58,455.69 L374.34,457.96 L377.11,460.22 L379.89,462.47 L382.68,464.71 L385.48,466.94 L388.29,469.16 L391.10,471.38 L393.91,473.59 L396.72,475.80 L399.53,478.01 L402.34,480.21 L405.15,482.42 L407.95,484.62 L410.74,486.83 L413.52,489.03 L416.29,491.25 L419.05,493.46 L421.80,495.68 L424.53,497.91 L427.24,500.14 L429.94,502.38 L432.61,504.64 L435.26,506.90 L437.89,509.17 L440.50,511.46 L443.07,513.76 L445.62,516.07 L448.14,518.40 L450.63,520.75 L453.08,523.12 L455.50,525.50 L457.65,522.71 L459.79,519.93 L461.91,517.13 L464.01,514.34 L466.10,511.54 L468.17,508.73 L470.23,505.92 L472.27,503.10 L474.30,500.28 L476.30,497.46 L478.30,494.62 L480.27,491.79 L482.23,488.94 L484.18,486.09 L486.10,483.23 L488.01,480.36 L489.91,477.49 L491.78,474.61 L493.64,471.71 L495.48,468.82 L497.31,465.91 L499.12,462.99 L500.91,460.06 L502.68,457.13 L504.43,454.18 L506.17,451.23 L507.89,448.26 L509.59,445.28 L511.28,442.29 L512.94,439.29 L514.59,436.28 L516.22,433.26 L517.83,430.22 L519.42,427.17 L520.99,424.11 L522.55,421.04 L524.09,417.95 L525.60,414.85 L527.10,411.74 L528.58,408.61 L530.04,405.46 L531.48,402.31 L532.90,399.13 L534.31,395.95 L535.69,392.74 L537.05,389.52 L538.39,386.29 L539.72,383.03 L541.02,379.77 L542.31,376.48 L543.57,373.18 L544.81,369.86 L546.03,366.52 L547.24,363.16 L548.42,359.79 L549.56,356.40 L550.65,353.00 L551.69,349.59 L552.64,346.17 L553.52,342.75 L554.29,339.34 L554.95,335.92 L555.48,332.51 L555.88,329.11 L556.12,325.72 L556.20,322.35 L556.11,319.00 L555.82,315.66 L555.33,312.35 L554.63,309.07 L553.70,305.82 L552.55,302.61 L551.18,299.47 L549.60,296.40 L547.83,293.43 L545.88,290.58 L543.75,287.87 L541.46,285.31 L539.01,282.93 L536.42,280.74 L533.70,278.75 L530.85,277.00 L527.90,275.50 L524.84,274.25 L521.69,273.27 L518.46,272.53 L515.16,272.04 L511.81,271.78 L508.42,271.75 L504.99,271.93 L501.55,272.33 L498.10,272.92 L494.65,273.72 L491.22,274.69 L487.81,275.85 L484.45,277.17 L481.14,278.65 L477.89,280.29 L474.72,282.08 L471.64,284.00 L468.65,286.05 L465.74,288.21 L462.92,290.48 L460.19,292.85 L457.52,295.29 L454.93,297.81 L452.41,300.39 L449.95,303.01 L447.55,305.67 L445.20,308.36 L442.90,311.06 L440.65,313.77 L438.44,316.46 L436.26,319.13 L434.12,321.78 L432.01,324.38 L429.92,326.92 L427.85,329.40Z" fill="none" stroke="#e8004c" stroke-width="10.2" stroke-linejoin="miter" stroke-miterlimit="10"/><path d="M699.44,230.63 L701.20,230.73 L702.93,230.94 L704.63,231.26 L706.31,231.67 L707.96,232.16 L709.58,232.74 L711.19,233.39 L712.78,234.10 L714.34,234.88 L715.89,235.70 L717.43,236.57 L718.95,237.48 L720.46,238.42 L721.96,239.38 L723.45,240.35 L724.94,241.34 L726.41,242.34 L727.88,243.34 L729.35,244.35 L730.81,245.37 L732.26,246.39 L733.71,247.42 L735.15,248.46 L736.59,249.51 L738.02,250.56 L739.45,251.61 L740.87,252.67 L742.29,253.74 L743.71,254.81 L745.12,255.89 L746.53,256.97 L747.93,258.05 L749.33,259.14 L750.73,260.23 L752.13,261.32 L753.53,262.42 L754.92,263.52 L756.31,264.62 L757.70,265.72 L759.09,266.83 L760.48,267.93 L761.87,269.04 L763.26,270.15 L764.65,271.26 L766.03,272.37 L767.42,273.48 L768.81,274.59 L770.20,275.70 L771.59,276.80 L772.98,277.91 L774.37,279.02 L775.77,280.12 L777.16,281.22 L778.56,282.33 L779.96,283.42 L781.36,284.52 L782.77,285.61 L784.18,286.70 L785.59,287.78 L787.00,288.86 L788.42,289.93 L789.84,291.00 L791.27,292.07 L792.69,293.13 L794.13,294.18 L795.56,295.23 L797.00,296.27 L798.45,297.30 L799.89,298.32 L801.35,299.34 L802.81,300.35 L804.27,301.35 L805.74,302.34 L807.21,303.33 L808.69,304.30 L810.17,305.27 L811.66,306.23 L813.14,307.19 L814.63,308.15 L816.11,309.12 L817.59,310.09 L819.07,311.06 L820.54,312.05 L822.01,313.04 L823.47,314.05 L824.91,315.08 L826.35,316.12 L827.78,317.18 L829.19,318.27 L830.58,319.38 L831.97,320.52 L833.33,321.68 L834.67,322.88 L836.00,324.11 L837.30,325.38 L838.58,326.69 L839.81,328.03 L841.00,329.42 L842.12,330.84 L843.17,332.31 L844.13,333.82 L845.01,335.38 L845.77,336.99 L846.42,338.64 L846.94,340.34 L847.32,342.10 L847.55,343.90 L847.64,345.72 L847.59,347.56 L847.39,349.39 L847.04,351.18 L846.55,352.93 L845.92,354.62 L845.15,356.22 L844.24,357.72 L843.20,359.11 L842.04,360.42 L840.77,361.64 L839.41,362.78 L837.96,363.85 L836.45,364.85 L834.88,365.80 L833.27,366.70 L831.62,367.55 L829.95,368.37 L828.28,369.17 L826.60,369.94 L824.94,370.70 L823.29,371.44 L821.65,372.18 L820.02,372.92 L818.41,373.66 L816.82,374.41 L815.25,375.16 L813.71,375.93 L812.18,376.72 L810.69,377.53 L809.21,378.36 L807.75,379.21 L806.30,380.07 L804.84,380.94 L803.38,381.82 L801.91,382.70 L800.42,383.58 L798.91,384.45 L797.36,385.31 L795.77,386.16 L794.14,387.00 L792.45,387.82 L790.71,388.61 L788.90,389.38 L787.01,390.12 L785.08,390.84 L783.15,391.56 L781.28,392.31 L779.53,393.13 L777.96,394.03 L776.62,395.04 L775.58,396.20 L774.89,397.52 L774.61,399.02 L774.70,400.63 L775.14,402.24 L775.89,403.76 L776.92,405.10 L778.19,406.23 L779.66,407.18 L781.30,407.98 L783.07,408.66 L784.93,409.25 L786.85,409.79 L788.78,410.31 L790.70,410.82 L792.55,411.38 L794.32,412.00 L795.95,412.72 L797.41,413.58 L798.67,414.59 L799.69,415.79 L800.42,417.22 L800.84,418.89 L800.96,420.74 L800.77,422.68 L800.32,424.59 L799.60,426.39 L798.63,427.98 L797.45,429.32 L796.09,430.45 L794.57,431.40 L792.94,432.21 L791.23,432.91 L789.46,433.54 L787.68,434.13 L785.93,434.73 L784.21,435.36 L782.55,436.03 L780.92,436.72 L779.33,437.45 L777.76,438.21 L776.21,439.00 L774.67,439.81 L773.13,440.63 L771.59,441.48 L770.03,442.34 L768.47,443.23 L766.91,444.16 L765.37,445.15 L763.87,446.23 L762.43,447.41 L761.04,448.72 L759.75,450.16 L758.62,451.71 L757.74,453.31 L757.22,454.90 L757.15,456.44 L757.61,457.88 L758.57,459.19 L759.91,460.40 L761.49,461.53 L763.17,462.60 L764.82,463.66 L766.28,464.75 L767.43,465.92 L768.11,467.21 L768.23,468.63 L767.88,470.13 L767.16,471.62 L766.20,473.02 L765.05,474.30 L763.74,475.49 L762.29,476.60 L760.73,477.63 L759.09,478.60 L757.40,479.53 L755.67,480.42 L753.94,481.29 L752.24,482.15 L750.58,483.02 L748.94,483.87 L747.33,484.70 L745.73,485.50 L744.13,486.26 L742.53,486.96 L740.91,487.61 L739.27,488.19 L737.60,488.69 L735.88,489.10 L734.12,489.41 L732.33,489.61 L730.54,489.68 L728.75,489.63 L727.00,489.43 L725.30,489.07 L723.66,488.54 L722.11,487.84 L720.66,486.94 L719.34,485.84 L718.16,484.53 L717.12,483.03 L716.16,481.41 L715.21,479.77 L714.23,478.19 L713.14,476.76 L711.88,475.55 L710.47,474.59 L708.91,473.83 L707.25,473.24 L705.50,472.81 L703.70,472.49 L701.87,472.26 L700.03,472.09 L698.19,471.94 L696.37,471.78 L694.55,471.60 L692.75,471.35 L690.97,471.00 L689.21,470.54 L687.49,469.92 L685.81,469.13 L684.21,468.14 L682.81,466.99 L681.70,465.70 L681.00,464.29 L680.79,462.78 L681.04,461.19 L681.66,459.56 L682.56,457.91 L683.64,456.27 L684.82,454.65 L686.00,453.07 L687.13,451.50 L688.10,449.92 L688.86,448.34 L689.31,446.73 L689.39,445.07 L689.08,443.40 L688.44,441.78 L687.54,440.27 L686.45,438.93 L685.20,437.79 L683.82,436.85 L682.32,436.08 L680.71,435.47 L679.01,434.99 L677.23,434.63 L675.39,434.37 L673.50,434.19 L671.57,434.08 L669.62,434.01 L667.66,433.97 L665.70,433.94 L663.77,433.90 L661.88,433.84 L660.03,433.73 L658.23,433.57 L656.49,433.35 L654.78,433.09 L653.09,432.79 L651.43,432.44 L649.78,432.06 L648.13,431.66 L646.47,431.22 L644.79,430.77 L643.09,430.30 L641.35,429.81 L639.57,429.32 L637.73,428.82 L635.83,428.32 L633.87,427.82 L631.87,427.31 L629.93,426.74 L628.12,426.08 L626.53,425.29 L625.24,424.32 L624.34,423.14 L623.91,421.73 L623.92,420.12 L624.32,418.42 L625.05,416.72 L626.05,415.12 L627.27,413.71 L628.65,412.52 L630.17,411.52 L631.78,410.63 L633.47,409.82 L635.20,409.02 L636.94,408.18 L638.66,407.25 L640.33,406.17 L641.86,404.95 L643.14,403.65 L644.04,402.30 L644.45,400.96 L644.24,399.69 L643.41,398.52 L642.12,397.45 L640.53,396.50 L638.81,395.69 L637.06,395.01 L635.30,394.45 L633.53,394.00 L631.74,393.65 L629.94,393.39 L628.14,393.20 L626.33,393.08 L624.52,393.01 L622.71,392.98 L620.90,392.97 L619.09,392.98 L617.28,393.00 L615.48,393.00 L613.69,392.99 L611.90,392.94 L610.13,392.86 L608.36,392.73 L606.61,392.54 L604.87,392.29 L603.14,391.95 L601.42,391.54 L599.71,391.03 L598.02,390.41 L596.34,389.68 L594.68,388.83 L593.05,387.85 L591.47,386.76 L589.99,385.55 L588.64,384.24 L587.47,382.84 L586.50,381.35 L585.78,379.78 L585.32,378.14 L585.11,376.45 L585.11,374.72 L585.30,372.96 L585.65,371.20 L586.12,369.44 L586.69,367.69 L587.32,365.98 L588.01,364.31 L588.74,362.67 L589.53,361.06 L590.36,359.48 L591.23,357.93 L592.14,356.41 L593.09,354.91 L594.07,353.43 L595.08,351.97 L596.12,350.54 L597.18,349.11 L598.27,347.71 L599.37,346.31 L600.49,344.92 L601.62,343.55 L602.76,342.18 L603.91,340.81 L605.06,339.45 L606.21,338.08 L607.36,336.72 L608.51,335.35 L609.64,333.97 L610.77,332.59 L611.88,331.20 L612.97,329.80 L614.06,328.39 L615.13,326.97 L616.19,325.55 L617.23,324.11 L618.27,322.67 L619.30,321.22 L620.32,319.77 L621.33,318.31 L622.33,316.85 L623.33,315.38 L624.32,313.91 L625.31,312.44 L626.30,310.96 L627.28,309.49 L628.27,308.01 L629.25,306.53 L630.23,305.05 L631.21,303.57 L632.20,302.09 L633.19,300.62 L634.18,299.14 L635.17,297.67 L636.17,296.20 L637.18,294.74 L638.19,293.27 L639.20,291.81 L640.21,290.35 L641.23,288.89 L642.24,287.43 L643.26,285.98 L644.28,284.52 L645.29,283.05 L646.30,281.59 L647.31,280.13 L648.31,278.66 L649.31,277.19 L650.31,275.71 L651.30,274.24 L652.28,272.75 L653.25,271.26 L654.22,269.77 L655.17,268.27 L656.12,266.77 L657.06,265.25 L657.98,263.73 L658.90,262.20 L659.80,260.67 L660.69,259.13 L661.59,257.58 L662.48,256.04 L663.38,254.51 L664.30,252.99 L665.23,251.49 L666.19,250.00 L667.18,248.54 L668.20,247.11 L669.27,245.70 L670.38,244.34 L671.55,243.01 L672.77,241.73 L674.05,240.50 L675.40,239.32 L676.83,238.19 L678.33,237.13 L679.90,236.13 L681.53,235.20 L683.22,234.34 L684.96,233.56 L686.73,232.87 L688.53,232.26 L690.34,231.73 L692.17,231.31 L694.01,230.98 L695.83,230.75 L697.65,230.63 L699.44,230.63Z" fill="none" stroke="#727471" stroke-width="5.2" stroke-linejoin="round"/><path d="M813.90,416.00 L813.91,414.81 L814.44,413.32 L815.39,411.62 L816.66,409.82 L818.17,408.04 L819.83,406.39 L821.54,404.97 L823.20,403.90 L825.19,403.04 L827.49,402.38 L830.00,401.92 L832.61,401.65 L835.23,401.59 L837.73,401.73 L840.03,402.06 L842.00,402.60 L843.42,403.21 L844.86,404.01 L846.25,404.97 L847.54,406.03 L848.66,407.15 L849.53,408.29 L850.10,409.38 L850.30,410.40 L850.09,411.38 L849.51,412.42 L848.63,413.46 L847.51,414.50 L846.23,415.49 L844.84,416.40 L843.41,417.22 L842.00,417.90 L840.04,418.61 L837.77,419.17 L835.31,419.58 L832.73,419.86 L830.14,420.00 L827.62,420.02 L825.28,419.92 L823.20,419.70 L821.76,419.48 L820.26,419.20 L818.78,418.86 L817.38,418.46 L816.12,417.97 L815.08,417.41 L814.32,416.75Z" fill="none" stroke="#727471" stroke-width="5.2" stroke-linejoin="round"/><path d="M807.40,434.70 L807.50,433.68 L807.79,432.56 L808.25,431.38 L808.83,430.23 L809.53,429.17 L810.31,428.27 L811.14,427.59 L812.00,427.20 L813.37,427.18 L815.12,427.62 L817.09,428.43 L819.13,429.51 L821.10,430.77 L822.83,432.12 L824.19,433.46 L825.00,434.70 L825.27,435.60 L825.36,436.61 L825.30,437.68 L825.11,438.76 L824.78,439.81 L824.35,440.76 L823.81,441.58 L823.20,442.20 L822.23,442.73 L820.94,443.10 L819.44,443.32 L817.82,443.38 L816.17,443.29 L814.58,443.06 L813.16,442.70 L812.00,442.20 L811.12,441.60 L810.28,440.82 L809.50,439.90 L808.81,438.89 L808.23,437.82 L807.79,436.74 L807.50,435.69Z" fill="none" stroke="#727471" stroke-width="5.2" stroke-linejoin="round"/><path d="M649.60,461.30 L649.82,459.91 L650.37,458.34 L651.21,456.68 L652.27,454.99 L653.52,453.36 L654.91,451.87 L656.39,450.59 L657.90,449.60 L659.98,448.73 L662.56,448.04 L665.44,447.55 L668.41,447.29 L671.27,447.27 L673.81,447.51 L675.82,448.05 L677.10,448.90 L677.60,449.93 L677.75,451.29 L677.60,452.91 L677.22,454.67 L676.66,456.49 L675.96,458.26 L675.19,459.90 L674.40,461.30 L673.54,462.52 L672.53,463.70 L671.39,464.82 L670.16,465.87 L668.85,466.81 L667.50,467.63 L666.14,468.30 L664.80,468.80 L663.47,469.13 L662.02,469.35 L660.52,469.44 L659.00,469.42 L657.53,469.27 L656.13,469.01 L654.87,468.62 L653.80,468.10 L652.99,467.53 L652.21,466.84 L651.49,466.04 L650.85,465.16 L650.32,464.22 L649.91,463.25 L649.67,462.27Z" fill="none" stroke="#727471" stroke-width="5.2" stroke-linejoin="round"/><path d="M129.5,295.5 L129.5,310 L133,306.8 L135.6,312.3 L137.6,311.4 L135.2,306 L139.8,305.8 Z" fill="#fff" stroke="#000" stroke-width="1.1"/><g transform="translate(149,316.6)"><path d="M0,-7 L7,0 L0,7 L-7,0 Z" fill="#000" stroke="#fff" stroke-width="1"/><g fill="none" stroke="#fff" stroke-width="0.9"><circle cx="-1.6" cy="-1.9" r="1.3"/><circle cx="-1.6" cy="1.9" r="1.3"/><path d="M1,-3.2 A1.3,1.3 0 0 1 1,-0.6 M1,0.6 A1.3,1.3 0 0 1 1,3.2"/></g><path d="M0,-5.5 V5.5" stroke="#000" stroke-width="0.8"/></g></svg>
</div>
<div class="a" style="left:917px;top:61px;width:16px;height:613px;background:#ebeae8"></div>
<div class="a" style="left:933px;top:61px;width:1px;height:613px;background:#d8d6d3"></div>
<div class="a" style="left:922px;top:267px;width:6px;height:196px;background:#d0cfcd;border-radius:3px"></div>
<div class="a" style="left:64px;top:657px;width:853px;height:17px;background:#ebeae8"></div>
<div class="a" style="left:357px;top:661.5px;width:271px;height:6px;background:#d0cfcd;border-radius:3px"></div>
<svg class="ic" style="left:918px;top:61px" width="15" height="15" viewBox="0 0 15 15" ><rect x="0.5" y="0.5" width="14" height="14" rx="2" fill="#f6f6f4" stroke="#cfcdca"/><path d="M5,4.5 L7.5,3 V12 M5.5,12 H9.5" fill="none" stroke="#444" stroke-width="1.3"/><rect x="4" y="3" width="7" height="9.5" fill="none" stroke="#555" stroke-width="0.8"/></svg>
<svg class="ic" style="left:917px;top:658px" width="16" height="16" viewBox="0 0 16 16" ><rect x="0.5" y="0.5" width="15" height="15" rx="3" fill="#f8f8f6" stroke="#e0dedb"/><path d="M2.5,2.5 L13,8 L3.5,13.5 Z" fill="#bde0d0"/><path d="M7,5 L13,8 L7,11Z" fill="#f8c0d0"/><path d="M3,9 L7,11 L3.5,13.5Z" fill="#a8c8f0"/></svg>
<div class="a" style="left:3px;top:64px;width:40px;height:30.5px;background:#e4e3e1;border:1px solid #d6d4d1;border-radius:5px"></div>
<div class="sep" style="left:4px;top:133px;width:38px;height:1px"></div>
<div class="sep" style="left:4px;top:303px;width:38px;height:1px"></div>
<div class="sep" style="left:4px;top:442.5px;width:38px;height:1px"></div>
<div class="sep" style="left:4px;top:581.5px;width:38px;height:1px"></div>
<svg class="ic" style="left:15px;top:72px" width="14" height="18" viewBox="0 0 14 18" ><path d="M1.5,1 L1.5,15 L5,11.8 L8,17 L10.6,15.6 L7.8,10.6 L12.5,10.3 Z" fill="#111" stroke="#fff" stroke-width="0.8"/></svg>
<svg class="ic" style="left:10px;top:98px" width="26" height="26" viewBox="0 0 26 26" ><path d="M10.5,5.5 C13.5,4 16.5,3.4 19.5,3.6" fill="none" stroke="#444" stroke-width="0.9"/><path d="M5,11 C3.3,13 3.2,16 3.8,18.8" fill="none" stroke="#444" stroke-width="0.9"/><rect x="4" y="4" width="7" height="7" fill="#4060f0" stroke="#0000d8" stroke-width="1.3"/><rect x="6" y="6" width="3" height="3" fill="#8090ff"/><rect x="19.6" y="2" width="4" height="3.4" fill="#c8d0ff" stroke="#2020e0" stroke-width="1"/><rect x="2" y="18.8" width="4" height="4.6" fill="#c8d0ff" stroke="#2020e0" stroke-width="1"/><path d="M10.3,10.3 L20.9,16.6 L15.9,21.5 Z" fill="#111"/></svg>
<svg class="ic" style="left:12px;top:145px" width="21" height="20" viewBox="0 0 21 20" ><defs><linearGradient id="gr1" x1="0" y1="0" x2="1" y2="1"><stop offset="0" stop-color="#f4f8fc"/><stop offset="1" stop-color="#9cbcdc"/></linearGradient></defs><rect x="1.6" y="1.6" width="17" height="16.4" fill="url(#gr1)" stroke="#111" stroke-width="1.3"/></svg>
<svg class="ic" style="left:12px;top:176px" width="22" height="22" viewBox="0 0 22 22" ><defs><radialGradient id="gr2" cx="0.62" cy="0.3" r="0.75"><stop offset="0" stop-color="#ffffff"/><stop offset="0.35" stop-color="#fbe0e8"/><stop offset="1" stop-color="#f094b0"/></radialGradient></defs><circle cx="10.6" cy="10.5" r="9.2" fill="url(#gr2)" stroke="#222" stroke-width="1.2"/></svg>
<svg class="ic" style="left:10px;top:206px" width="26" height="24" viewBox="0 0 26 24" ><defs><linearGradient id="gst" x1="0" y1="0" x2="1" y2="1"><stop offset="0" stop-color="#fff8c0"/><stop offset="1" stop-color="#e8c840"/></linearGradient></defs><path d="M2,6 L9.5,2.8 L16.5,7 L14.5,15.5 L4.5,16.5 Z" fill="url(#gst)" stroke="#222" stroke-width="0.9" stroke-linejoin="round"/><path d="M16.8,6.8 L18.8,11.2 L23.8,11.6 L20,14.8 L21.3,19.8 L16.8,17.2 L12.3,19.8 L13.6,14.8 L9.8,11.6 L14.8,11.2 Z" fill="url(#gst)" stroke="#222" stroke-width="0.9" stroke-linejoin="round"/></svg>
<svg class="ic" style="left:10px;top:236px" width="26" height="27" viewBox="0 0 26 27" ><defs><linearGradient id="gb1" x1="0" y1="0" x2="1" y2="0.3"><stop offset="0" stop-color="#a0a8d8"/><stop offset="1" stop-color="#f4f4fc"/></linearGradient></defs><path d="M14.5,2.5 L22.5,8.5 V19.5 L12.5,24.5 L3.8,18.5 V7.5 Z" fill="url(#gb1)" stroke="#333" stroke-width="1.1" stroke-linejoin="round"/><path d="M4.3,18.3 L13,15.5 L22,19.3 L12.5,24 Z" fill="#4848a0"/><path d="M14.5,2.5 L22.5,8.5 V19.5 L13,15.5Z" fill="#fafaff" opacity="0.55"/></svg>
<svg class="ic" style="left:1px;top:260.5px" width="42" height="42" viewBox="0 0 42 42" ><path d="M18.71,22.03 L18.62,22.02 L18.52,22.01 L18.42,21.98 L18.32,21.95 L18.23,21.92 L18.13,21.87 L18.03,21.82 L17.94,21.76 L17.85,21.69 L17.76,21.62 L17.67,21.54 L17.59,21.45 L17.51,21.35 L17.44,21.25 L17.37,21.14 L17.31,21.03 L17.26,20.91 L17.21,20.79 L17.17,20.66 L17.14,20.52 L17.12,20.38 L17.10,20.24 L17.09,20.10 L17.10,19.95 L17.11,19.80 L17.13,19.65 L17.16,19.50 L17.20,19.35 L17.25,19.20 L17.31,19.05 L17.39,18.90 L17.47,18.76 L17.56,18.61 L17.66,18.48 L17.77,18.34 L17.89,18.21 L18.02,18.09 L18.16,17.97 L18.31,17.86 L18.47,17.76 L18.64,17.67 L18.81,17.58 L18.99,17.50 L19.18,17.44 L19.37,17.38 L19.57,17.34 L19.77,17.30 L19.98,17.28 L20.19,17.27 L20.40,17.27 L20.62,17.28 L20.83,17.31 L21.05,17.35 L21.27,17.40 L21.48,17.47 L21.70,17.55 L21.91,17.64 L22.11,17.74 L22.32,17.86 L22.51,17.99 L22.71,18.13 L22.89,18.29 L23.07,18.46 L23.23,18.64 L23.39,18.83 L23.54,19.03 L23.68,19.24 L23.80,19.46 L23.92,19.69 L24.02,19.93 L24.11,20.17 L24.18,20.42 L24.24,20.68 L24.28,20.95 L24.31,21.22 L24.32,21.49 L24.32,21.76 L24.30,22.04 L24.26,22.32 L24.21,22.59 L24.14,22.87 L24.05,23.14 L23.95,23.41 L23.83,23.68 L23.69,23.94 L23.53,24.20 L23.36,24.45 L23.18,24.69 L22.98,24.92 L22.76,25.14 L22.53,25.35 L22.28,25.55 L22.02,25.73 L21.75,25.90 L21.47,26.06 L21.18,26.20 L20.87,26.33 L20.56,26.44 L20.24,26.53 L19.91,26.61 L19.58,26.67 L19.23,26.71 L18.89,26.72 L18.54,26.72 L18.19,26.71 L17.84,26.67 L17.49,26.61 L17.14,26.53 L16.80,26.43 L16.46,26.31 L16.12,26.17 L15.79,26.01 L15.47,25.83 L15.16,25.63 L14.85,25.41 L14.56,25.17 L14.28,24.92 L14.02,24.65 L13.77,24.37 L13.53,24.06 L13.31,23.75 L13.11,23.42 L12.93,23.07 L12.77,22.72 L12.62,22.35 L12.50,21.98 L12.40,21.59 L12.32,21.20 L12.26,20.80 L12.23,20.40 L12.22,19.99 L12.24,19.58 L12.28,19.17 L12.34,18.76 L12.42,18.35 L12.54,17.95 L12.67,17.55 L12.83,17.15 L13.01,16.77 L13.22,16.39 L13.45,16.02 L13.70,15.66 L13.98,15.32 L14.27,14.99 L14.59,14.68 L14.92,14.38 L15.28,14.10 L15.65,13.84 L16.04,13.59 L16.44,13.37 L16.86,13.17 L17.30,13.00 L17.74,12.85 L18.19,12.72 L18.66,12.62 L19.13,12.54 L19.61,12.49 L20.09,12.46 L20.57,12.47 L21.06,12.50 L21.55,12.55 L22.03,12.64 L22.52,12.75 L22.99,12.89 L23.46,13.06 L23.93,13.25 L24.38,13.47 L24.82,13.72 L25.25,13.99 L25.66,14.29 L26.06,14.61 L26.44,14.95 L26.80,15.32 L27.14,15.71 L27.46,16.12 L27.76,16.55 L28.03,16.99 L28.28,17.46 L28.50,17.93 L28.69,18.43 L28.86,18.93 L29.00,19.45 L29.11,19.97 L29.18,20.50 L29.23,21.04 L29.24,21.58 L29.23,22.13 L29.18,22.67 L29.10,23.22 L28.99,23.76 L28.84,24.29 L28.67,24.82 L28.46,25.34 L28.22,25.85 L27.95,26.35 L27.65,26.84 L27.33,27.31 L26.97,27.76 L26.59,28.20 L26.18,28.61" fill="none" stroke="#111" stroke-width="1.3"/></svg>
<svg class="ic" style="left:10px;top:310px" width="26" height="28" viewBox="0 0 26 28" ><path d="M2.5,6 H14.5 C12,8 8,12 11.8,24.5" fill="none" stroke="#111" stroke-width="1.2"/><path d="M3,24.5 H13" stroke="#111" stroke-width="1.1"/><rect x="1.3" y="23" width="3" height="3" fill="#fff" stroke="#111" stroke-width="0.9"/><rect x="11.5" y="23" width="3" height="3" fill="#fff" stroke="#111" stroke-width="0.9"/><path d="M13.5,21.5 L20.5,9.5 L25,12 L17.5,23.5 Z" fill="#5aa8e0" stroke="#222" stroke-width="0.9"/><path d="M20.5,9.5 L22.5,5.5 L26,7.5 L25,12 Z" fill="#b8dcf4" stroke="#222" stroke-width="0.8"/><path d="M13.5,21.5 L12.5,24 L17.5,23.5Z" fill="#222"/></svg>
<svg class="ic" style="left:10px;top:343px" width="26" height="27" viewBox="0 0 26 27" ><path d="M3,4 C5,3 7,3 6.5,5 C5.5,8 2,11 4,14 C6,17 8,20 11,23" fill="none" stroke="#111" stroke-width="1.1"/><path d="M11,23 C14,24 17,22 20,18" fill="none" stroke="#111" stroke-width="0.9"/><path d="M12.5,20.5 L19.5,6.5 L25,9.5 L17.5,23 Z" fill="#f4c430" stroke="#222" stroke-width="1"/><path d="M19.5,6.5 L21,3.5 L26,6.5 L25,9.5Z" fill="#f0e0b0" stroke="#222" stroke-width="0.8"/><path d="M12.5,20.5 L12,24.5 L17.5,23Z" fill="#f8e8c0" stroke="#222" stroke-width="0.8"/><path d="M12,24.5 L13.2,22.5 L14.5,23.6Z" fill="#222"/></svg>
<svg class="ic" style="left:10px;top:374px" width="26" height="28" viewBox="0 0 26 28" ><path d="M6,3.5 C1.5,6 1,12 4,17 C6,21 8,23 10,24.5 C14,26 19,26 23,23 C18,24 14,23.5 12,21 C9,17 8,11 9,6 C9.3,4.5 8,3 6,3.5Z" fill="#111"/><path d="M14,20 L17,11 L21,13 L17.5,21.5 Z" fill="#f4d040" stroke="#222" stroke-width="0.9"/><path d="M17,11 L18,8.5 L22.5,10.5 L21,13Z" fill="#d82020" stroke="#222" stroke-width="0.8"/><path d="M18,8.5 L20,4 L25,6 L22.5,10.5Z" fill="#5aa8e0" stroke="#222" stroke-width="0.8"/><path d="M14,20 L13,23.5 L17.5,21.5Z" fill="#222"/></svg>
<svg class="ic" style="left:10px;top:408px" width="26" height="24" viewBox="0 0 26 24" ><defs><linearGradient id="gA" x1="0" y1="0" x2="0" y2="1"><stop offset="0" stop-color="#666"/><stop offset="0.5" stop-color="#222"/><stop offset="1" stop-color="#000"/></linearGradient></defs><path d="M1.5,21 L8,3 H13.5 L20,21 H15.2 L14,17 H7.5 L6.3,21 Z M8.8,13 H12.7 L10.75,6.8 Z" fill="url(#gA)" stroke="#111" stroke-width="0.8" stroke-linejoin="round"/><path d="M19,2.5 H23 M21,2.5 V21.5 M19,21.5 H23" stroke="#111" stroke-width="1.1" fill="none"/></svg>
<svg class="ic" style="left:12px;top:455px" width="20" height="20" viewBox="0 0 20 20" ><defs><linearGradient id="gr3" x1="0" y1="0" x2="1" y2="1"><stop offset="0" stop-color="#3a9a50"/><stop offset="1" stop-color="#d8f0c8"/></linearGradient></defs><rect x="1" y="1" width="18" height="18" fill="url(#gr3)"/><path d="M5,5 L15,14" stroke="#222" stroke-width="1"/><rect x="3" y="3" width="4" height="4" fill="#fff" stroke="#222" stroke-width="1"/><rect x="13" y="12" width="4" height="4" fill="#fff" stroke="#222" stroke-width="1"/></svg>
<svg class="ic" style="left:12px;top:486px" width="20" height="20" viewBox="0 0 20 20" ><path d="M5,2 L18,5 L15,18 L2,15 Z" fill="#4aa0a0" stroke="#333" stroke-width="1"/><path d="M5,2 L18,5 L15,18Z" fill="#80c8c0" opacity="0.6"/><g fill="#fff" stroke="#111" stroke-width="1.2"><rect x="1.5" y="1" width="4" height="4"/><rect x="15" y="1" width="4" height="4"/><rect x="1.5" y="15" width="4" height="4"/><rect x="15" y="15" width="4" height="4"/></g></svg>
<svg class="ic" style="left:11px;top:516px" width="22" height="22" viewBox="0 0 22 22" ><path d="M13,4 C15,1 20,3 18,7 L16,9 L12,5Z" fill="#111"/><path d="M12,5 L16,9 L14.5,10.5 L10.5,6.5Z" fill="#444"/><path d="M11.5,8 L4,15.5 L3,19 L6.5,18 L14,10.5Z" fill="#a8d0f0" stroke="#333" stroke-width="1"/><path d="M4,15.5 L3,19 L6.5,18Z" fill="#2a70c0"/></svg>
<svg class="ic" style="left:10px;top:547px" width="24" height="24" viewBox="0 0 24 24" ><ellipse cx="8" cy="20" rx="7" ry="2.5" fill="#50b860"/><path d="M6,10 L14,5 L20,13 L12,18 Z" fill="#5a90c8" stroke="#222" stroke-width="1.1"/><path d="M6,10 L14,5 L15.5,7 L7.5,12Z" fill="#a8d0f0"/><path d="M6,10 C3,12 4,17 6,19" fill="none" stroke="#50b860" stroke-width="2"/><path d="M14,5 C14,2 18,1 19,4" fill="none" stroke="#222" stroke-width="1"/></svg>
<svg class="ic" style="left:10px;top:590px" width="26" height="24" viewBox="0 0 26 24" ><defs><linearGradient id="gr4" x1="0" y1="0" x2="0" y2="1"><stop offset="0" stop-color="#666"/><stop offset="1" stop-color="#d8d8d8"/></linearGradient></defs><path d="M2,12 C6,11 8,8 10,5 C12,2 17,1 19.5,3 C21.5,4.5 21,7 19,7 C17.5,7 17,5.5 18,5 C16,4.5 14,6 14,9 C14,11 17,12 23,12 V22 H2 Z" fill="url(#gr4)" stroke="#333" stroke-width="0.9" stroke-linejoin="round"/><path d="M2,12 C6,11 8,8 10,5 C12,2 17,1 19.5,3" fill="none" stroke="#111" stroke-width="1.3"/><path d="M3,15 C8,14 12,14.5 16,14 C19,13.7 21,14 23,14.5" fill="none" stroke="#fff" stroke-width="1.2"/></svg>
<svg class="ic" style="left:19px;top:650px" width="6" height="10" viewBox="0 0 6 10" ><path d="M1,0.5 L5.5,5 L1,9.5Z" fill="#8a8a8a"/></svg>
<div class="a" style="left:934px;top:61px;width:84px;height:613px;background:#f4f2f1"></div>
<div class="sep" style="left:940px;top:277px;width:33px;height:1px"></div>
<div class="sep" style="left:940px;top:355.5px;width:33px;height:1px"></div>
<div class="sep" style="left:940px;top:465.5px;width:33px;height:1px"></div>
<div class="sep" style="left:940px;top:608px;width:33px;height:1px"></div>
<div class="sep" style="left:980px;top:102px;width:34px;height:1px"></div>
<div class="sep" style="left:980px;top:277px;width:34px;height:1px"></div>
<div class="sep" style="left:980px;top:485.5px;width:34px;height:1px"></div>
<div class="sep" style="left:980px;top:627px;width:34px;height:1px"></div>
<div class="a" style="left:980.5px;top:285.5px;width:33px;height:29.5px;background:#e4e3e1;border:1px solid #d8d6d3;border-radius:5px"></div>
<div class="a" style="left:980.5px;top:382px;width:33px;height:30.5px;background:#e4e3e1;border:1px solid #d8d6d3;border-radius:5px"></div>
<div class="a" style="left:980.5px;top:492.5px;width:33px;height:31.0px;background:#e4e3e1;border:1px solid #d8d6d3;border-radius:5px"></div>
<svg class="ic" style="left:949px;top:72px" width="16" height="17" viewBox="0 0 16 17" ><path d="M1.5,1.5 H8 L11,4.5 V15.5 H1.5Z" fill="#fff" stroke="#aaa" stroke-width="1"/><circle cx="11" cy="10.5" r="4.2" fill="#2a5aa8" stroke="#fff" stroke-width="0.8"/><path d="M8.5,10.5 H13.5 M11,8 V13" stroke="#fff" stroke-width="1.4"/></svg>
<svg class="ic" style="left:948px;top:105px" width="17" height="16" viewBox="0 0 17 16" ><path d="M1.5,3 H6 L7.5,4.5 H14.5 V14 H1.5Z" fill="#c8a870" stroke="#a08050" stroke-width="1"/><rect x="4" y="6" width="9" height="4" fill="#fff" stroke="#888" stroke-width="0.6"/><path d="M1.5,14 L3,9 H15.5 L14.5,14Z" fill="#e8d0a0" stroke="#a08050" stroke-width="0.8"/></svg>
<svg class="ic" style="left:948px;top:137px" width="16" height="17" viewBox="0 0 16 17" ><path d="M6,1 H9 V8 H11 L7.5,11 L4,8 H6Z" fill="#fff" stroke="#333" stroke-width="0.9"/><rect x="1" y="11" width="14" height="4.5" fill="#2a70c8" stroke="#1a4a90" stroke-width="0.8"/><rect x="4" y="12.5" width="8" height="1.3" fill="#fff"/></svg>
<svg class="ic" style="left:948px;top:169px" width="17" height="16" viewBox="0 0 17 16" ><rect x="1" y="3.5" width="15" height="8.5" rx="2" fill="#666" stroke="#222" stroke-width="1"/><rect x="4" y="1" width="9" height="4" fill="#ddd" stroke="#333" stroke-width="0.8"/><rect x="4" y="9" width="9" height="6" fill="#f4f4e8" stroke="#222" stroke-width="1"/><path d="M6,11 L11,12.5" stroke="#8c8" stroke-width="0.8"/></svg>
<svg class="ic" style="left:947px;top:214px" width="18" height="17" viewBox="0 0 18 17" ><path d="M5.5,1.5 H12 L15,4.5 V15.5 H5.5Z" fill="#f0f0f0" stroke="#222" stroke-width="1"/><path d="M1,9 H9" stroke="#111" stroke-width="1.3"/><path d="M7.5,6 L11,9 L7.5,12Z" fill="#111"/></svg>
<svg class="ic" style="left:947px;top:247px" width="18" height="17" viewBox="0 0 18 17" ><path d="M1.5,1.5 H8 L11,4.5 V15.5 H1.5Z" fill="#f0f0f0" stroke="#222" stroke-width="1"/><path d="M6,9 H14" stroke="#111" stroke-width="1.3"/><path d="M13,6 L16.5,9 L13,12Z" fill="#111"/></svg>
<svg class="ic" style="left:947px;top:292px" width="18" height="16" viewBox="0 0 18 16" ><path d="M6,2 L1.5,6 L6,10 V7.5 H11 C14,7.5 14,12.5 11,12.5 H7" fill="none" stroke="#e8dca8" stroke-width="2"/></svg>
<svg class="ic" style="left:947px;top:324px" width="18" height="16" viewBox="0 0 18 16" ><path d="M12,2 L16.5,6 L12,10 V7.5 H7 C4,7.5 4,12.5 7,12.5 H11" fill="none" stroke="#c8e0b0" stroke-width="2"/></svg>
<svg class="ic" style="left:948px;top:369px" width="17" height="17" viewBox="0 0 17 17" ><rect x="1.5" y="1.5" width="9" height="9" fill="#fafafa" stroke="#333" stroke-width="1"/><path d="M3.5,4 H8.5 M3.5,6 H8.5" stroke="#777" stroke-width="0.6"/><rect x="6.5" y="6.5" width="9" height="9" fill="#f4f4f4" stroke="#333" stroke-width="1"/><path d="M8.5,9 H13.5 M8.5,11 H13.5 M8.5,13 H13.5" stroke="#777" stroke-width="0.6"/></svg>
<svg class="ic" style="left:947px;top:401px" width="18" height="18" viewBox="0 0 18 18" ><path d="M5,11 L12,1 M13,11 L6,1" stroke="#aaa" stroke-width="1.6"/><path d="M5,11 L12,1 M13,11 L6,1" stroke="#555" stroke-width="0.6"/><circle cx="5" cy="13.5" r="3.6" fill="#d81020" stroke="#901010" stroke-width="0.8"/><circle cx="13" cy="13.5" r="3.6" fill="#d81020" stroke="#901010" stroke-width="0.8"/><circle cx="5" cy="13.5" r="1.2" fill="#fff"/><circle cx="13" cy="13.5" r="1.2" fill="#fff"/></svg>
<svg class="ic" style="left:947px;top:434px" width="18" height="18" viewBox="0 0 18 18" ><rect x="1.5" y="2.5" width="12" height="14" fill="#e8b060" stroke="#8a5a20" stroke-width="1"/><rect x="4.5" y="1" width="6" height="3" fill="#777" stroke="#333" stroke-width="0.8"/><rect x="7" y="6" width="9.5" height="11" fill="#fff" stroke="#333" stroke-width="1"/><path d="M9,9 H14.5 M9,11 H14.5 M9,13 H14.5" stroke="#555" stroke-width="0.8"/></svg>
<svg class="ic" style="left:947px;top:479px" width="18" height="18" viewBox="0 0 18 18" ><path d="M12,12 L16.5,16.5" stroke="#111" stroke-width="2.4"/><circle cx="8" cy="8" r="6.5" fill="#d8e4f0" stroke="#111" stroke-width="1.4"/><rect x="4" y="5" width="8" height="6" fill="none" stroke="#333" stroke-width="0.9" stroke-dasharray="1,1"/><path d="M5,8 H11" stroke="#555" stroke-width="0.8" stroke-dasharray="1,1"/></svg>
<svg class="ic" style="left:947px;top:511px" width="18" height="18" viewBox="0 0 18 18" ><path d="M12,12 L16.5,16.5" stroke="#111" stroke-width="2.4"/><circle cx="8" cy="8" r="6.5" fill="#d8e4f0" stroke="#111" stroke-width="1.4"/><rect x="4" y="4" width="5" height="5" fill="#f0c030" stroke="#333" stroke-width="0.8"/><rect x="7" y="7" width="5" height="5" fill="#f0c030" stroke="#333" stroke-width="0.8"/></svg>
<svg class="ic" style="left:947px;top:544px" width="18" height="18" viewBox="0 0 18 18" ><path d="M12,12 L16.5,16.5" stroke="#111" stroke-width="2.4"/><circle cx="8" cy="8" r="6.5" fill="#d8e4f0" stroke="#111" stroke-width="1.4"/><rect x="5" y="3.5" width="6" height="9" fill="#fff" stroke="#222" stroke-width="1"/></svg>
<svg class="ic" style="left:949px;top:577px" width="15" height="17" viewBox="0 0 15 17" ><rect x="3" y="2" width="9" height="13" fill="#f0f0f0" stroke="#777" stroke-width="0.8"/><path d="M1,4 V1 H4 M11,1 H14 V4 M14,13 V16 H11 M4,16 H1 V13" fill="none" stroke="#111" stroke-width="1.5"/></svg>
<svg class="ic" style="left:953px;top:650px" width="6" height="10" viewBox="0 0 6 10" ><path d="M1,0.5 L5.5,5 L1,9.5Z" fill="#8a8a8a"/></svg>
<svg class="ic" style="left:988px;top:72px" width="18" height="16" viewBox="0 0 18 16" ><path d="M4.5,3.5 L12.5,11.5" stroke="#111" stroke-width="1.4"/><path d="M9.5,12.3 L13.8,13 L13,8.8Z" fill="#111"/><rect x="2" y="1.5" width="3" height="3" transform="rotate(45 3.5 3)" fill="#9090ff" stroke="#2020e0" stroke-width="0.9"/><ellipse cx="14.5" cy="13.5" rx="2.6" ry="2" fill="#80b080" stroke="#207020" stroke-width="0.9"/></svg>
<svg class="ic" style="left:988px;top:116px" width="18" height="18" viewBox="0 0 18 18" ><g opacity="0.35"><path d="M4,4 L13,13" stroke="#888" stroke-width="1" stroke-dasharray="1.5,1"/><rect x="2" y="2" width="3.5" height="3.5" transform="rotate(45 3.75 3.75)" fill="none" stroke="#6060ff" stroke-width="1"/><rect x="12" y="12" width="3.5" height="3.5" transform="rotate(45 13.75 13.75)" fill="none" stroke="#40a040" stroke-width="1"/></g></svg>
<svg class="ic" style="left:988px;top:148px" width="18" height="18" viewBox="0 0 18 18" ><g opacity="0.35"><path d="M13,2 V14 H2" fill="none" stroke="#8a8" stroke-width="1" stroke-dasharray="1.5,1"/></g></svg>
<svg class="ic" style="left:988px;top:181px" width="18" height="18" viewBox="0 0 18 18" ><g opacity="0.35"><path d="M13,2 V14 H2" fill="none" stroke="#8a8" stroke-width="1" stroke-dasharray="1.5,1"/><rect x="11" y="12" width="4" height="4" transform="rotate(45 13 14)" fill="none" stroke="#40a040" stroke-width="1"/></g></svg>
<svg class="ic" style="left:988px;top:213px" width="18" height="18" viewBox="0 0 18 18" ><g opacity="0.35"><path d="M13,2 V14 H2" fill="none" stroke="#8a8" stroke-width="1" stroke-dasharray="1.5,1"/><circle cx="13" cy="7" r="2" fill="none" stroke="#40a040"/></g></svg>
<svg class="ic" style="left:988px;top:246px" width="18" height="18" viewBox="0 0 18 18" ><g opacity="0.35"><path d="M13,2 V14 H2" fill="none" stroke="#8a8" stroke-width="1" stroke-dasharray="1.5,1"/><circle cx="7" cy="8" r="1.5" fill="none" stroke="#40a040"/></g></svg>
<svg class="ic" style="left:988px;top:291px" width="18" height="18" viewBox="0 0 18 18" ><g opacity="0.6"><path d="M4,4 L13,13" stroke="#888" stroke-width="1" stroke-dasharray="1.5,1"/><rect x="2" y="2" width="3.5" height="3.5" transform="rotate(45 3.75 3.75)" fill="none" stroke="#6060ff" stroke-width="1"/><rect x="12" y="12" width="3.5" height="3.5" transform="rotate(45 13.75 13.75)" fill="none" stroke="#40a040" stroke-width="1"/></g></svg>
<svg class="ic" style="left:988px;top:323px" width="18" height="18" viewBox="0 0 18 18" ><g opacity="0.35"><path d="M2,3 C8,3 12,8 13,13" fill="none" stroke="#5a5" stroke-width="1"/><circle cx="13" cy="13" r="2" fill="none" stroke="#40a040"/></g></svg>
<svg class="ic" style="left:988px;top:356px" width="18" height="18" viewBox="0 0 18 18" ><g opacity="0.35"><path d="M2,14 L16,4" stroke="#8a8" stroke-width="1"/><path d="M3,6 C8,7 11,10 15,14" fill="none" stroke="#8a8"/><circle cx="9" cy="9" r="2" fill="none" stroke="#40a040"/></g></svg>
<svg class="ic" style="left:988px;top:388px" width="18" height="18" viewBox="0 0 18 18" ><g opacity="0.6"><path d="M2,3 C8,3 12,8 11,13" fill="none" stroke="#888" stroke-width="1"/><circle cx="11" cy="13" r="2" fill="none" stroke="#40a040"/></g></svg>
<svg class="ic" style="left:988px;top:421px" width="18" height="18" viewBox="0 0 18 18" ><g opacity="0.35"><path d="M2,3 H8 C11,3 12,8 10,13" fill="none" stroke="#5a5" stroke-width="1"/></g></svg>
<svg class="ic" style="left:988px;top:454px" width="18" height="18" viewBox="0 0 18 18" ><g opacity="0.35"><path d="M2,15 L16,3" stroke="#e06080" stroke-width="1" stroke-dasharray="2,1"/><circle cx="9" cy="9" r="2" fill="none" stroke="#40a040"/></g></svg>
<svg class="ic" style="left:988px;top:499px" width="18" height="18" viewBox="0 0 18 18" ><g opacity="0.6"><path d="M4,4 L13,13" stroke="#888" stroke-width="1" stroke-dasharray="1.5,1"/><rect x="2" y="2" width="3.5" height="3.5" transform="rotate(45 3.75 3.75)" fill="none" stroke="#6060ff" stroke-width="1"/><rect x="12" y="12" width="3.5" height="3.5" transform="rotate(45 13.75 13.75)" fill="none" stroke="#40a040" stroke-width="1"/></g></svg>
<svg class="ic" style="left:988px;top:531px" width="18" height="18" viewBox="0 0 18 18" ><g opacity="0.35"><path d="M5,13 H15 V3" fill="none" stroke="#8a8" stroke-width="1"/><circle cx="8" cy="8" r="1.6" fill="none" stroke="#40a040"/></g></svg>
<svg class="ic" style="left:988px;top:563px" width="18" height="18" viewBox="0 0 18 18" ><g opacity="0.35"><path d="M3,8 H9 M6,5 V11" stroke="#888" stroke-width="1"/><path d="M13,2 V15 H3" fill="none" stroke="#888" stroke-dasharray="1.5,1"/></g></svg>
<svg class="ic" style="left:988px;top:595px" width="18" height="18" viewBox="0 0 18 18" ><g opacity="0.35"><path d="M2,16 L7,2 H11 L16,16 H12.5 L11.5,13 H6.5 L5.5,16Z M7.5,10 H10.5 L9,5.5Z" fill="#555"/><path d="M3,15 L9,12" stroke="#40a040" stroke-width="1"/></g></svg>
<svg class="ic" style="left:994px;top:650px" width="7" height="11" viewBox="0 0 7 11" ><path d="M1,0.5 L6,5.5 L1,10.5Z" fill="#8a8a8a"/></svg>
<div class="a" style="left:0;top:674px;width:1018px;height:42px;background:#f4f2f1"></div>
<div class="a" style="left:0;top:706px;width:984px;height:10px;background:#ebeae8"></div>
<div class="a" style="left:2px;top:710px;width:37px;height:4.5px;background:#d0cfcd;border-radius:2px"></div>
<svg class="ic" style="left:0;top:674px" width="984" height="32" shape-rendering="crispEdges"><rect x="0" y="0" width="11" height="32" fill="#ffffff"/><rect x="11" y="0" width="11" height="32" fill="#000000"/><rect x="22" y="0" width="11" height="32" fill="#262626"/><rect x="33" y="0" width="11" height="32" fill="#333333"/><rect x="44" y="0" width="11" height="32" fill="#474747"/><rect x="55" y="0" width="11" height="32" fill="#5e5e5e"/><rect x="66" y="0" width="11" height="32" fill="#757575"/><rect x="77" y="0" width="11" height="32" fill="#919191"/><rect x="88" y="0" width="12" height="32" fill="#aaaaaa"/><rect x="100" y="0" width="11" height="32" fill="#c4c4c4"/><rect x="111" y="0" width="11" height="32" fill="#e0e0e0"/><rect x="122" y="0" width="44" height="32" fill="#ffffff"/><rect x="166" y="0" width="11" height="32" fill="#dcdcdc"/><rect x="177" y="0" width="11" height="32" fill="#f0d8dc"/><rect x="188" y="0" width="11" height="32" fill="#ffd3da"/><rect x="199" y="0" width="12" height="32" fill="#ffc8d2"/><rect x="211" y="0" width="11" height="32" fill="#ffbcc9"/><rect x="222" y="0" width="111" height="32" fill="#e3e3e3"/><rect x="333" y="0" width="11" height="32" fill="#c8c8c8"/><rect x="344" y="0" width="11" height="32" fill="#d4bcc0"/><rect x="355" y="0" width="11" height="32" fill="#f0b4be"/><rect x="366" y="0" width="11" height="32" fill="#ffacba"/><rect x="377" y="0" width="11" height="32" fill="#ffa3b3"/><rect x="388" y="0" width="11" height="32" fill="#ff9aad"/><rect x="399" y="0" width="23" height="32" fill="#ff8ba3"/><rect x="422" y="0" width="78" height="32" fill="#cacaca"/><rect x="500" y="0" width="11" height="32" fill="#a8a8a8"/><rect x="511" y="0" width="11" height="32" fill="#b8a4a8"/><rect x="522" y="0" width="11" height="32" fill="#c8a2aa"/><rect x="533" y="0" width="11" height="32" fill="#d89ca8"/><rect x="544" y="0" width="11" height="32" fill="#e89ca9"/><rect x="555" y="0" width="11" height="32" fill="#ff8e9f"/><rect x="566" y="0" width="11" height="32" fill="#ff879a"/><rect x="577" y="0" width="23" height="32" fill="#ff6d8c"/><rect x="600" y="0" width="22" height="32" fill="#ff4a7c"/><rect x="622" y="0" width="44" height="32" fill="#b2b2b2"/><rect x="666" y="0" width="11" height="32" fill="#8f8f8f"/><rect x="677" y="0" width="11" height="32" fill="#a08088"/><rect x="688" y="0" width="12" height="32" fill="#b0787f"/><rect x="700" y="0" width="11" height="32" fill="#b57580"/><rect x="711" y="0" width="11" height="32" fill="#c47080"/><rect x="722" y="0" width="11" height="32" fill="#d46a80"/><rect x="733" y="0" width="11" height="32" fill="#de6680"/><rect x="744" y="0" width="11" height="32" fill="#e85e80"/><rect x="755" y="0" width="11" height="32" fill="#f04e7e"/><rect x="766" y="0" width="11" height="32" fill="#f83a7a"/><rect x="777" y="0" width="11" height="32" fill="#ff207a"/><rect x="788" y="0" width="12" height="32" fill="#ff0070"/><rect x="800" y="0" width="33" height="32" fill="#909090"/><rect x="833" y="0" width="11" height="32" fill="#767676"/><rect x="844" y="0" width="11" height="32" fill="#7e6a6e"/><rect x="855" y="0" width="11" height="32" fill="#8c6870"/><rect x="866" y="0" width="11" height="32" fill="#9a6470"/><rect x="877" y="0" width="11" height="32" fill="#aa5e70"/><rect x="888" y="0" width="11" height="32" fill="#bc5670"/><rect x="899" y="0" width="11" height="32" fill="#cc4c70"/><rect x="910" y="0" width="11" height="32" fill="#de3c70"/><rect x="921" y="0" width="12" height="32" fill="#ee2470"/><rect x="933" y="0" width="45" height="32" fill="#ff0066"/><rect x="978" y="0" width="6" height="32" fill="#6e6e6e"/><path d="M1,0 L8,32 M11,0 L2.5,32" stroke="#8a1010" stroke-width="1.3"/></svg>
<svg class="ic" style="left:997px;top:691px" width="7" height="10" viewBox="0 0 7 10" ><path d="M6,0.5 L1,5 L6,9.5Z" fill="#8a8a8a"/></svg>
<div class="a" style="left:2px;top:720px;font-size:11px;color:#8a8288">Fill:</div>
<div class="a" style="left:38px;top:718px;width:30px;height:16px;background:#2a292a;border-radius:3px"></div>
<div class="a" style="left:2px;top:735px;font-size:11px;color:#8a8288">Stroke: <i>None</i> 1.80</div>
<div class="a" style="left:94px;top:726px;font-size:11px;color:#a8a0a8">O:</div>
<div class="sb" style="left:106.5px;top:718.5px;width:62.0px;height:31.0px"></div><div class="a" style="left:138px;top:719.5px;width:1px;height:29.0px;background:#e8e6e3"></div><div class="a" style="left:153px;top:719.5px;width:1px;height:29.0px;background:#e8e6e3"></div><div class="a" style="left:141.0px;top:733.0px;width:9px;height:2px;background:#8c8a8c"></div><div class="a" style="left:156.25px;top:733.0px;width:9px;height:2px;background:#8c8a8c"></div><div class="a" style="left:159.75px;top:729.5px;width:2px;height:9px;background:#8c8a8c"></div><div class="a" style="left:109.5px;top:726.9px;font-size:11.6px;color:#222;line-height:15px">82</div>
<div class="sep" style="left:175px;top:718px;width:1px;height:32px"></div>
<svg class="ic" style="left:185px;top:724px" width="18" height="16" viewBox="0 0 18 16" ><path d="M1.5,10 C5,5.8 13,5.8 16.5,10 C13,14.2 5,14.2 1.5,10 Z" fill="#fff" stroke="#111" stroke-width="1.2"/><circle cx="9.2" cy="10.3" r="3.3" fill="#111"/><circle cx="8.3" cy="9.2" r="0.8" fill="#fff"/><path d="M3.5,7.8 L2.2,5.5 M6.3,6.6 L5.6,3.2 M9.5,6.2 V2.6 M12.6,6.6 L13.4,3.4 M15,7.8 L16.4,5.6" stroke="#111" stroke-width="1.1"/></svg>
<svg class="ic" style="left:218px;top:722px" width="20" height="22" viewBox="0 0 20 22" ><defs><linearGradient id="glk" x1="0" y1="0" x2="1" y2="1"><stop offset="0" stop-color="#fffbd0"/><stop offset="1" stop-color="#e8c030"/></linearGradient></defs><path d="M5.8,7.2 C5.8,4.8 7.5,3.8 9.5,3.8 C12,3.8 13.8,6 14.3,10" fill="none" stroke="#111" stroke-width="1.3"/><path d="M5,11.8 L14.6,10 L16.6,17.3 L6.8,19.6 Z" fill="url(#glk)" stroke="#111" stroke-width="1.3" stroke-linejoin="round"/><path d="M10.5,13 L11.8,14.8 L9.6,15.4Z" fill="#111"/></svg>
<div class="a" style="left:245px;top:718px;width:71px;height:33px;border:1px solid #d6d4d1;border-radius:5px;background:#f5f4f3"></div>
<div class="a" style="left:256px;top:728px;font-size:10px;color:#6a666a">&#8226;Layer 2</div>
<svg class="ic" style="left:296px;top:732px" width="10" height="6" viewBox="0 0 10 6" ><path d="M0.5,0.5 H9.5 L5,5.5Z" fill="#777"/></svg>
<div class="a" style="left:338px;top:721px;font-size:11.5px;color:#7e7a7e;line-height:14px;white-space:nowrap"><b style="font-size:12px;color:#8a868a">Rectangle</b> &nbsp;in layer <b style="color:#6a666a">Layer 2</b>. Click selection to toggle scale/rotation<br>handles (or Shift+s).</div>
<div class="sep" style="left:703px;top:718px;width:1px;height:32px"></div>
<div class="a" style="left:713px;top:720px;font-size:11px;color:#a8a2a8">X:</div>
<div class="a" style="left:713px;top:736px;font-size:11px;color:#a8a2a8">Y:</div>
<div class="a" style="left:720px;top:719px;width:52px;text-align:right;font-size:11.5px;color:#7a767a">34.29</div>
<div class="a" style="left:720px;top:735px;width:52px;text-align:right;font-size:11.5px;color:#7a767a">151.35</div>
<div class="a" style="left:781px;top:727px;font-size:11px;color:#a8a2a8">Z:</div>
<div class="sb" style="left:800px;top:718.5px;width:86.5px;height:31.0px"></div><div class="a" style="left:845.5px;top:719.5px;width:1px;height:29.0px;background:#e8e6e3"></div><div class="a" style="left:864.5px;top:719.5px;width:1px;height:29.0px;background:#e8e6e3"></div><div class="a" style="left:850.5px;top:733.0px;width:9px;height:2px;background:#8c8a8c"></div><div class="a" style="left:871.0px;top:733.0px;width:9px;height:2px;background:#8c8a8c"></div><div class="a" style="left:874.5px;top:729.5px;width:2px;height:9px;background:#8c8a8c"></div><div class="a" style="left:812px;top:725.9px;font-size:11.6px;color:#222;line-height:15px">80%</div>
<div class="a" style="left:896px;top:726px;font-size:11px;color:#a8a2a8">R:</div>
<div class="sb" style="left:915px;top:718.5px;width:92.5px;height:31.0px"></div><div class="a" style="left:967px;top:719.5px;width:1px;height:29.0px;background:#e8e6e3"></div><div class="a" style="left:986px;top:719.5px;width:1px;height:29.0px;background:#e8e6e3"></div><div class="a" style="left:972.0px;top:733.0px;width:9px;height:2px;background:#8c8a8c"></div><div class="a" style="left:992.25px;top:733.0px;width:9px;height:2px;background:#8c8a8c"></div><div class="a" style="left:995.75px;top:729.5px;width:2px;height:9px;background:#8c8a8c"></div><div class="a" style="left:930px;top:725.9px;font-size:11.6px;color:#222;line-height:15px">0.00&#176;</div>
</body></html>
